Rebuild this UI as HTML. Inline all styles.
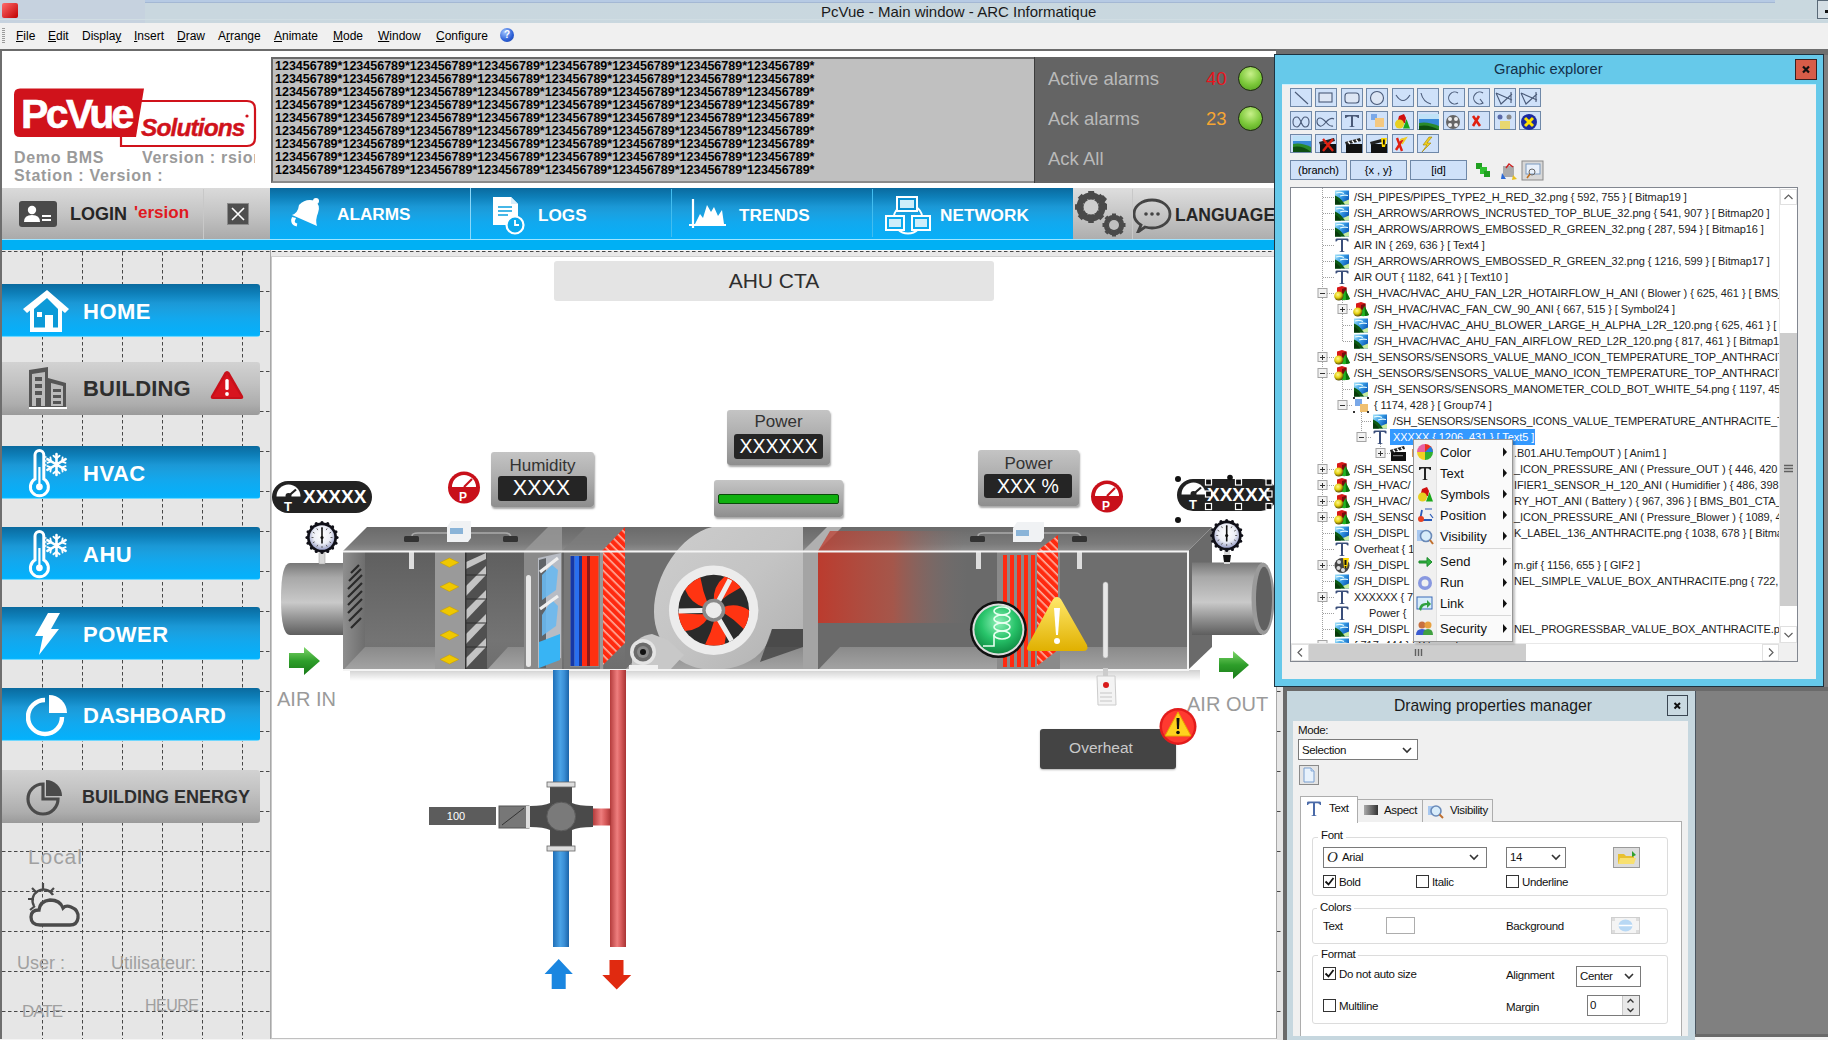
<!DOCTYPE html>
<html><head><meta charset="utf-8">
<style>
*{box-sizing:border-box;margin:0;padding:0}
html,body{width:1828px;height:1040px;overflow:hidden;background:#808080;font-family:"Liberation Sans",sans-serif}
.a{position:absolute}
.nw{white-space:nowrap}
#titlebar{left:0;top:0;width:1828px;height:23px;background:linear-gradient(90deg,#c6d2df 0,#c6d2df 145px,#c9d7df 145px,#c9d8df 100%)}
#menubar{left:0;top:23px;width:1828px;height:26px;background:#f0f0f0}
.menu{font-size:12px;color:#000;top:29px}
.menu u{text-decoration:underline}
#main{left:0;top:49px;width:1276px;height:991px;background:#fff;border-top:2px solid #6b6b6b}
</style></head><body>
<!-- title bar -->
<div id="titlebar" class="a">
  <div class="a" style="left:145px;top:0;width:1630px;height:3px;background:#b6cae4;border-bottom:1px solid #a4b8d4"></div><div class="a" style="left:0;top:19px;width:1828px;height:1px;background:#d0dde3"></div>
  <div class="a" style="left:2px;top:3px;width:16px;height:15px;border-radius:2px;background:linear-gradient(135deg,#ff6b6b,#c00000)"></div>
  <div class="a nw" style="left:821px;top:3px;font-size:15px;color:#1a1a1a">PcVue - Main window - ARC Informatique</div>
  <div class="a" style="left:1817px;top:0;width:11px;height:19px;border:1px solid #5a6a78;border-right:none;background:#d4dee4"></div><div class="a" style="left:1825px;top:10px;width:3px;height:3px;background:#111"></div>
</div>
<div id="menubar" class="a">
  <div class="a" style="left:2px;top:5px;width:3px;height:16px;background:repeating-linear-gradient(#9a9a9a 0 1px,transparent 1px 2px)"></div>
</div>
<div class="a menu nw" style="left:16px"><u>F</u>ile</div>
<div class="a menu nw" style="left:48px"><u>E</u>dit</div>
<div class="a menu nw" style="left:82px">Displa<u>y</u></div>
<div class="a menu nw" style="left:134px"><u>I</u>nsert</div>
<div class="a menu nw" style="left:177px"><u>D</u>raw</div>
<div class="a menu nw" style="left:218px">A<u>r</u>range</div>
<div class="a menu nw" style="left:274px"><u>A</u>nimate</div>
<div class="a menu nw" style="left:333px"><u>M</u>ode</div>
<div class="a menu nw" style="left:378px"><u>W</u>indow</div>
<div class="a menu nw" style="left:436px"><u>C</u>onfigure</div>
<div class="a" style="left:500px;top:28px;width:14px;height:14px;border-radius:50%;background:radial-gradient(circle at 35% 30%,#9fc3ff,#2c5fd6 60%,#1b3f9a);color:#fff;font-size:10px;font-weight:bold;text-align:center;line-height:14px">?</div>

<!-- main window -->
<div id="main" class="a"></div>

<!-- left border -->
<div class="a" style="left:0;top:51px;width:2px;height:989px;background:#6e6e6e"></div>
<!-- logo -->
<svg class="a" style="left:0;top:80px" width="270" height="110">
  <path d="M121,21 L247,21 Q255,21 255,29 L255,58 Q255,66 247,66 L121,66 Z" fill="#fff" stroke="#d0121b" stroke-width="2.2"/>
  <path d="M20,8.5 L144,8.5 L136,57 L20,57 Q14,57 14,51 L14,14.5 Q14,8.5 20,8.5 Z" fill="#d0121b"/>
  <path d="M136,57 L127,57 L122,65" fill="none" stroke="#fff" stroke-width="0"/>
  <text x="21" y="47.5" font-family="Liberation Sans" font-weight="bold" font-size="41" fill="#fff" letter-spacing="-2.6" stroke="#fff" stroke-width="0.6">PcVue</text>
  <text x="141" y="55.5" font-family="Liberation Sans" font-weight="bold" font-style="italic" font-size="24.5" fill="#d0121b" letter-spacing="-0.9" stroke="#d0121b" stroke-width="0.4">Solutions</text>
  <circle cx="247" cy="36" r="1.6" fill="#d0121b"/>
</svg>
<div class="a nw" style="left:14px;top:149px;font-size:16px;font-weight:bold;color:#9a9a9a;letter-spacing:0.7px">Demo BMS</div>
<div class="a nw" style="left:142px;top:149px;width:113px;overflow:hidden;font-size:16px;font-weight:bold;color:#9a9a9a;letter-spacing:0.7px">Version : rsion</div>
<div class="a nw" style="left:14px;top:167px;font-size:16px;font-weight:bold;color:#9a9a9a;letter-spacing:0.7px">Station : Version :</div>
<!-- text box -->
<div class="a" style="left:271px;top:57px;width:764px;height:126px;background:#c0c0c0;border:2px solid #6a6a6a;border-right:none;border-bottom-color:#8a8a8a;overflow:hidden">
 <div class="a" style="left:2px;top:1px;font-size:12.5px;font-weight:bold;line-height:13px;color:#000;white-space:pre">123456789*123456789*123456789*123456789*123456789*123456789*123456789*123456789*
123456789*123456789*123456789*123456789*123456789*123456789*123456789*123456789*
123456789*123456789*123456789*123456789*123456789*123456789*123456789*123456789*
123456789*123456789*123456789*123456789*123456789*123456789*123456789*123456789*
123456789*123456789*123456789*123456789*123456789*123456789*123456789*123456789*
123456789*123456789*123456789*123456789*123456789*123456789*123456789*123456789*
123456789*123456789*123456789*123456789*123456789*123456789*123456789*123456789*
123456789*123456789*123456789*123456789*123456789*123456789*123456789*123456789*
123456789*123456789*123456789*123456789*123456789*123456789*123456789*123456789*</div>
</div>

<!-- NAV BAR -->
<div class="a" style="left:2px;top:188px;width:268px;height:52px;background:linear-gradient(#dadada,#c4c4c4 50%,#a9a9a9)"></div>
<div class="a" style="left:203px;top:189px;width:1px;height:51px;background:#c8c8c8"></div>
<div class="a" style="left:19px;top:201px;width:38px;height:26px;border-radius:3px;background:#4a4a4a"></div>
<svg class="a" style="left:19px;top:201px" width="38" height="26"><circle cx="13" cy="9" r="4.2" fill="#fff"/><path d="M5,21 Q5,14 13,14 Q21,14 21,21 Z" fill="#fff"/><rect x="23" y="14" width="9" height="2" fill="#fff"/><rect x="23" y="18" width="9" height="2" fill="#fff"/></svg>
<div class="a nw" style="left:70px;top:205px;font-size:18px;line-height:18px;font-weight:bold;color:#262626">LOGIN</div>
<div class="a nw" style="left:134px;top:204px;font-size:17px;line-height:17px;font-weight:bold;color:#e01820">'ersion</div>
<div class="a" style="left:227px;top:203px;width:22px;height:22px;background:#4f4f4f;border:1px solid #8a8a8a"></div>
<svg class="a" style="left:227px;top:203px" width="22" height="22"><path d="M5,5 L17,17 M17,5 L5,17" stroke="#fff" stroke-width="1.6"/></svg>

<div class="a" style="left:270px;top:188px;width:803px;height:52px;background:linear-gradient(#0a6a9e 0,#0e80ba 18%,#1b98d6 36%,#1aa0e0 48%,#12a8ee 65%,#0aaef6 90%,#06b0fa 100%)"></div>
<div class="a" style="left:270px;top:188px;width:201px;height:52px;border:1px solid #8ad8fa;border-top:none;border-left:none"></div>
<div class="a" style="left:671px;top:189px;width:1px;height:48px;background:#42bdf0"></div>
<div class="a" style="left:872px;top:189px;width:1px;height:48px;background:#42bdf0"></div>
<!-- bell -->
<svg class="a" style="left:286px;top:196px" width="38" height="36"><path d="M13,9 Q20,2 29,5 Q35,9 32,17 Q29,24 31,30 L6,19 Q12,17 13,9 Z" fill="#fff"/><path d="M6,21 Q4,26 8,27 L10,22 Z" fill="#fff"/><circle cx="30" cy="5" r="3" fill="#fff"/><path d="M7,23 Q6,28 11,29" stroke="#fff" stroke-width="3" fill="none"/></svg>
<div class="a nw" style="left:337px;top:206px;font-size:17.2px;line-height:17px;font-weight:bold;color:#fff">ALARMS</div>
<!-- logs -->
<svg class="a" style="left:490px;top:195px" width="40" height="40"><path d="M3,2 L21,2 L28,9 L28,30 L3,30 Z" fill="#fff"/><path d="M21,2 L21,9 L28,9" fill="#d8eefa"/><path d="M8,12 L22,12 M8,16 L22,16 M8,20 L18,20" stroke="#0aa0e0" stroke-width="1.3"/><circle cx="25" cy="30" r="8.5" fill="#0aa8ec" stroke="#fff" stroke-width="2.2"/><path d="M25,25 L25,30 L29,30" stroke="#fff" stroke-width="1.8" fill="none"/></svg>
<div class="a nw" style="left:538px;top:207px;font-size:17.2px;line-height:17px;font-weight:bold;color:#fff">LOGS</div>
<!-- trends -->
<svg class="a" style="left:688px;top:196px" width="40" height="36"><path d="M5,3 L5,32 M1,29 L38,29" stroke="#fff" stroke-width="2.2"/><path d="M7,28 L12,18 L15,22 L19,9 L23,16 L26,11 L30,20 L34,14 L36,28 Z" fill="#fff"/></svg>
<div class="a nw" style="left:739px;top:207px;font-size:17.2px;line-height:17px;font-weight:bold;color:#fff">TRENDS</div>
<!-- network -->
<svg class="a" style="left:884px;top:195px" width="48" height="42"><circle cx="24" cy="24" r="14.5" fill="none" stroke="#fff" stroke-width="1.8"/><rect x="13" y="2" width="20" height="14" fill="#0b8fd0" stroke="#fff" stroke-width="2"/><rect x="16" y="5" width="14" height="8" fill="#cfeefa"/><rect x="2" y="21" width="18" height="14" fill="#0aa8ec" stroke="#fff" stroke-width="2"/><rect x="28" y="21" width="18" height="14" fill="#0aa8ec" stroke="#fff" stroke-width="2"/><rect x="5" y="24" width="12" height="8" fill="#cfeefa"/><rect x="31" y="24" width="12" height="8" fill="#cfeefa"/></svg>
<div class="a nw" style="left:940px;top:207px;font-size:17.2px;line-height:17px;font-weight:bold;color:#fff">NETWORK</div>

<div class="a" style="left:1073px;top:188px;width:202px;height:52px;background:linear-gradient(#dedede,#c6c6c6 50%,#adadad)"></div>
<div class="a" style="left:1132px;top:189px;width:1px;height:51px;background:#c8c8c8"></div>
<svg class="a" style="left:1074px;top:190px" width="58" height="48">
 <g fill="#4a4a4a" transform="translate(17,17)">
  <path d="M-3,-16 L3,-16 L4,-11 L8,-9 L12,-12 L16,-8 L13,-4 L15,0 L16,3 L16,-3 Z"/>
 </g>
 <g transform="translate(17,17)"><circle r="11.5" fill="none" stroke="#4a4a4a" stroke-width="6"/>
  <g stroke="#4a4a4a" stroke-width="5.5"><path d="M0,-16 V16 M-16,0 H16 M-11.3,-11.3 L11.3,11.3 M11.3,-11.3 L-11.3,11.3"/></g>
  <circle r="7.5" fill="#cdcdcd"/></g>
 <g transform="translate(40,35)"><circle r="8" fill="none" stroke="#4a4a4a" stroke-width="4.5"/>
  <g stroke="#4a4a4a" stroke-width="4"><path d="M0,-11.5 V11.5 M-11.5,0 H11.5 M-8.1,-8.1 L8.1,8.1 M8.1,-8.1 L-8.1,8.1"/></g>
  <circle r="5" fill="#c0c0c0"/></g>
</svg>
<svg class="a" style="left:1133px;top:197px" width="42" height="36"><path d="M19,3 C29,3 37,9 37,17 C37,25 29,31 19,31 C16,31 14,30.5 12,30 L5,35 L8,28 C3,25 1,21 1,17 C1,9 9,3 19,3 Z" fill="none" stroke="#444" stroke-width="2.8"/><circle cx="13" cy="17" r="1.8" fill="#444"/><circle cx="19" cy="17" r="1.8" fill="#444"/><circle cx="25" cy="17" r="1.8" fill="#444"/></svg>
<div class="a" style="left:1175px;top:189px;width:100px;height:51px;overflow:hidden"><div class="a nw" style="left:0;top:18px;font-size:17.5px;line-height:17px;font-weight:bold;color:#262626">LANGUAGE</div></div>

<div class="a" style="left:2px;top:239px;width:1273px;height:11px;background:#00b0f4;border-top:1px solid #a0e4ff"></div><div class="a" style="left:271px;top:250px;width:1005px;height:6px;background:#e8e8e8;border-top:1px solid #f8f8f8"></div>

<!-- SIDEBAR -->
<div class="a" style="left:2px;top:250px;width:269px;height:789px;background:#e6e6e6;border-right:1px solid #a8a8a8"></div>
<svg class="a" style="left:0;top:250px" width="1276" height="790">
 <defs>
  <pattern id="gx" x="0" y="1" width="40" height="40" patternUnits="userSpaceOnUse"><path d="M0,0.5 H40" stroke="#3c3c3c" stroke-width="1" stroke-dasharray="3.5 2.5"/></pattern>
 </defs>
 <g stroke="#474747" stroke-width="1" stroke-dasharray="3.5 2.5">
  <path d="M2,1.5 H1276 M2,41.5 H270 M2,81.5 H270 M2,121.5 H270 M2,161.5 H270 M2,201.5 H270 M2,241.5 H270 M2,281.5 H270 M2,321.5 H270 M2,361.5 H270 M2,401.5 H270 M2,441.5 H270 M2,481.5 H270 M2,521.5 H270 M2,561.5 H270 M2,601.5 H270 M2,641.5 H270 M2,681.5 H270 M2,721.5 H270 M2,761.5 H270"/>
  <path d="M42.5,2 V789 M82.5,2 V789 M122.5,2 V789 M162.5,2 V789 M202.5,2 V789 M242.5,2 V789"/>
 </g>
</svg>

<!-- SIDEBAR BUTTONS -->
<style>
.bb{position:absolute;left:2px;width:258px;height:53px;border-radius:0 3px 3px 0;background:linear-gradient(#0a6a9e 0,#0e80ba 18%,#1b98d6 36%,#1aa0e0 48%,#12a8ee 65%,#06b0fa 92%,#03b2fc 97%,#a0e8ff 100%)}
.gb{position:absolute;left:2px;width:258px;height:53px;border-radius:0 3px 3px 0;background:linear-gradient(#d2d2d2 0,#c2c2c2 40%,#adadad 80%,#9a9a9a 100%)}
.bt{position:absolute;left:83px;font-size:22px;line-height:22px;font-weight:bold;white-space:nowrap;letter-spacing:0.5px}
</style>
<div class="bb" style="top:284px"></div>
<svg class="a" style="left:22px;top:287px" width="50" height="48"><path d="M25,3 L47,22 L43,26 L40,23.5 L40,45 L8,45 L8,23.5 L5,26 L1,22 Z" fill="#fff"/><path d="M12,22 L25,11 L36,22 L36,40.5 L12,40.5 Z" fill="#0c9ad8"/><rect x="15" y="25" width="5" height="5" fill="#fff"/><rect x="23" y="28" width="8" height="13" fill="#fff"/></svg>
<div class="bt" style="top:300.6px;color:#fff">HOME</div>

<div class="gb" style="top:362px"></div>
<svg class="a" style="left:26px;top:366px" width="42" height="44"><path d="M3,4 L22,1 L22,42 L3,42 Z" fill="#555"/><path d="M6,8 L19,6 L19,40 L6,40 Z" fill="#bbb"/><path d="M22,12 L40,17 L40,42 L22,42 Z" fill="#555"/><path d="M25,17 L37,20 L37,40 L25,40 Z" fill="#bbb"/><g fill="#555"><rect x="9" y="11" width="7" height="4"/><rect x="9" y="18" width="7" height="4"/><rect x="9" y="25" width="7" height="4"/><rect x="10" y="32" width="5" height="8"/><rect x="27" y="23" width="8" height="3"/><rect x="27" y="29" width="8" height="3"/><rect x="27" y="35" width="8" height="3"/></g><rect x="3" y="41" width="38" height="2" fill="#fff"/></svg>
<div class="bt" style="top:378.2px;color:#2e2e2e;letter-spacing:0.2px">BUILDING</div>
<svg class="a" style="left:209px;top:369px" width="36" height="32"><path d="M18,2 Q19.5,2 20.5,3.5 L34,27 Q35,30 32,30 L4,30 Q1,30 2,27 L15.5,3.5 Q16.5,2 18,2 Z" fill="#c8101a"/><path d="M18,5 L32,28 L4,28 Z" fill="#d8141e"/><rect x="16.3" y="10" width="3.4" height="11" rx="1.5" fill="#fff"/><circle cx="18" cy="25" r="1.9" fill="#fff"/></svg>

<div class="bb" style="top:446px"></div>
<svg class="a" style="left:26px;top:448px" width="46" height="52"><path d="M9,31 L9,7 A4.4,4.4 0 0 1 17.8,7 L17.8,31 A9,9 0 1 1 9,31 Z" fill="none" stroke="#fff" stroke-width="3"/><circle cx="13.4" cy="38.85" r="3.4" fill="#fff"/><rect x="12.3" y="19" width="2.2" height="19" fill="#fff"/><path d="M17.8,9 H20.5 M17.8,13 H20.5 M17.8,17 H20.5" stroke="#fff" stroke-width="1.3"/><g stroke="#fff" stroke-width="2.6" stroke-linecap="round" fill="none"><path d="M30.5,16.5 L30.5,6.0 M30.5,16.5 L21.4,11.2 M30.5,16.5 L21.4,21.8 M30.5,16.5 L30.5,27.0 M30.5,16.5 L39.6,21.8 M30.5,16.5 L39.6,11.2"/></g><g stroke="#fff" stroke-width="1.8" stroke-linecap="round" fill="none"><path d="M30.5,10.3 L33.6,7.7 M30.5,10.3 L27.4,7.7 M25.1,13.4 L24.4,9.5 M25.1,13.4 L21.4,14.8 M25.1,19.6 L21.4,18.2 M25.1,19.6 L24.4,23.5 M30.5,22.7 L27.4,25.3 M30.5,22.7 L33.6,25.3 M35.9,19.6 L36.6,23.5 M35.9,19.6 L39.6,18.2 M35.9,13.4 L39.6,14.8 M35.9,13.4 L36.6,9.5"/></g></svg>
<div class="bt" style="top:462.6px;color:#fff">HVAC</div>

<div class="bb" style="top:527px"></div>
<svg class="a" style="left:26px;top:529px" width="46" height="52"><path d="M9,31 L9,7 A4.4,4.4 0 0 1 17.8,7 L17.8,31 A9,9 0 1 1 9,31 Z" fill="none" stroke="#fff" stroke-width="3"/><circle cx="13.4" cy="38.85" r="3.4" fill="#fff"/><rect x="12.3" y="19" width="2.2" height="19" fill="#fff"/><path d="M17.8,9 H20.5 M17.8,13 H20.5 M17.8,17 H20.5" stroke="#fff" stroke-width="1.3"/><g stroke="#fff" stroke-width="2.6" stroke-linecap="round" fill="none"><path d="M30.5,16.5 L30.5,6.0 M30.5,16.5 L21.4,11.2 M30.5,16.5 L21.4,21.8 M30.5,16.5 L30.5,27.0 M30.5,16.5 L39.6,21.8 M30.5,16.5 L39.6,11.2"/></g><g stroke="#fff" stroke-width="1.8" stroke-linecap="round" fill="none"><path d="M30.5,10.3 L33.6,7.7 M30.5,10.3 L27.4,7.7 M25.1,13.4 L24.4,9.5 M25.1,13.4 L21.4,14.8 M25.1,19.6 L21.4,18.2 M25.1,19.6 L24.4,23.5 M30.5,22.7 L27.4,25.3 M30.5,22.7 L33.6,25.3 M35.9,19.6 L36.6,23.5 M35.9,19.6 L39.6,18.2 M35.9,13.4 L39.6,14.8 M35.9,13.4 L36.6,9.5"/></g></svg>
<div class="bt" style="top:543.5px;color:#fff">AHU</div>

<div class="bb" style="top:607px"></div>
<svg class="a" style="left:30px;top:612px" width="34" height="44"><path d="M18,1 L30,1 L21,17 L29,17 L9,43 L13,24 L5,24 Z" fill="#fff"/></svg>
<div class="bt" style="top:623.8px;color:#fff">POWER</div>

<div class="bb" style="top:688px"></div>
<svg class="a" style="left:26px;top:692px" width="44" height="46"><path d="M19,8 A17,17 0 1 0 36,25" fill="none" stroke="#fff" stroke-width="4.5"/><path d="M19,20 L19,8 A17,17 0 0 1 36,25 L24,25 Z" fill="none" stroke="#fff" stroke-width="0"/><path d="M23,3 A18,18 0 0 1 41,21 L23,21 Z" fill="#fff"/></svg>
<div class="bt" style="top:704.8px;color:#fff;letter-spacing:0px">DASHBOARD</div>

<div class="gb" style="top:770px"></div>
<svg class="a" style="left:24px;top:775px" width="44" height="44"><path d="M19,9 A15,15 0 1 0 34,24 L19,24 Z" fill="none" stroke="#4a4a4a" stroke-width="3.2"/><path d="M22,5 A16,16 0 0 1 38,21 L22,21 Z" fill="#4a4a4a"/></svg>
<div class="bt" style="top:788px;left:82px;font-size:18px;line-height:18px;color:#2e2e2e;letter-spacing:0">BUILDING ENERGY</div>

<div class="a nw" style="left:28px;top:845.5px;font-size:21px;line-height:21px;color:#a0a0a0;letter-spacing:0.9px">Local</div>
<svg class="a" style="left:26px;top:880px" width="60" height="50"><g stroke="#4a4a4a" stroke-width="2.2"><path d="M17,3 V9 M6,8 L10,12 M2,19 H8 M4,30 L9,26 M28,8 L24,12"/></g><path d="M8,26 A10,10 0 0 1 27,15" fill="none" stroke="#4a4a4a" stroke-width="2.4"/><path d="M14,45 Q5,45 5,37 Q5,30 13,30 Q14,21 24,20 Q34,20 37,28 Q40,25 45,27 Q53,30 52,38 Q51,45 44,45 Z" fill="#e6e6e6" stroke="#4a4a4a" stroke-width="3.3"/></svg>
<div class="a nw" style="left:17px;top:954px;font-size:18px;line-height:18px;color:#a0a0a0">User :</div>
<div class="a nw" style="left:111px;top:954px;font-size:18px;line-height:18px;color:#a0a0a0">Utilisateur:</div>
<div class="a nw" style="left:22px;top:1002.5px;font-size:17px;line-height:17px;color:#a0a0a0;letter-spacing:-1px">DATE</div>
<div class="a nw" style="left:145px;top:998px;font-size:16px;line-height:16px;color:#a0a0a0;letter-spacing:-0.5px">HEURE</div>

<!-- CANVAS -->
<div class="a" style="left:271px;top:256px;width:1006px;height:783px;background:#fff;border-left:1px solid #c8c8c8;border-top:1px solid #d0d0d0;border-bottom:1px solid #c0c0c0;border-right:1px solid #a8a8a8"></div><div class="a" style="left:0;top:1039px;width:1283px;height:1px;background:#f4f4f4"></div>

<!-- CANVAS CONTENT -->
<svg class="a" style="left:0;top:0" width="1276" height="1040" viewBox="0 0 1276 1040">
<defs>
 <linearGradient id="pipeV" x1="0" y1="0" x2="0" y2="1"><stop offset="0" stop-color="#777"/><stop offset="0.2" stop-color="#a8a8a8"/><stop offset="0.55" stop-color="#c9c9c9"/><stop offset="0.8" stop-color="#8c8c8c"/><stop offset="1" stop-color="#5e5e5e"/></linearGradient>
 <linearGradient id="topFace" x1="0" y1="0" x2="0" y2="1"><stop offset="0" stop-color="#6a6a6a"/><stop offset="0.7" stop-color="#7a7a7a"/><stop offset="1" stop-color="#8e8e8e"/></linearGradient>
 <linearGradient id="backWall" x1="0" y1="0" x2="0" y2="1"><stop offset="0" stop-color="#5f5f5f"/><stop offset="0.75" stop-color="#747474"/><stop offset="1" stop-color="#6e6e6e"/></linearGradient>
 <linearGradient id="floor" x1="0" y1="0" x2="0" y2="1"><stop offset="0" stop-color="#8a8a8a"/><stop offset="1" stop-color="#a4a4a4"/></linearGradient>
 <linearGradient id="sideWall" x1="0" y1="0" x2="1" y2="0"><stop offset="0" stop-color="#8e8e8e"/><stop offset="1" stop-color="#6e6e6e"/></linearGradient>
 <linearGradient id="boxG" x1="0" y1="0" x2="0" y2="1"><stop offset="0" stop-color="#c6c6c6"/><stop offset="0.6" stop-color="#a8a8a8"/><stop offset="1" stop-color="#8a8a8a"/></linearGradient>
 <linearGradient id="bluePipe" x1="0" y1="0" x2="1" y2="0"><stop offset="0" stop-color="#1f6fb8"/><stop offset="0.45" stop-color="#4ba3e6"/><stop offset="0.7" stop-color="#3a8fd6"/><stop offset="1" stop-color="#1c64a8"/></linearGradient>
 <linearGradient id="redPipe" x1="0" y1="0" x2="1" y2="0"><stop offset="0" stop-color="#b43c3c"/><stop offset="0.45" stop-color="#ee7e7e"/><stop offset="0.7" stop-color="#d65a5a"/><stop offset="1" stop-color="#a83434"/></linearGradient>
 <radialGradient id="gaugeFace" cx="0.5" cy="0.4" r="0.6"><stop offset="0" stop-color="#ffffff"/><stop offset="0.6" stop-color="#eceef6"/><stop offset="1" stop-color="#9aa0c8"/></radialGradient>
 <linearGradient id="redFlow" x1="0" y1="0" x2="1" y2="0"><stop offset="0" stop-color="#c0392b" stop-opacity="0.95"/><stop offset="0.5" stop-color="#b85040" stop-opacity="0.75"/><stop offset="1" stop-color="#777" stop-opacity="0"/></linearGradient>
 <radialGradient id="greenBtn" cx="0.5" cy="0.35" r="0.65"><stop offset="0" stop-color="#8ff0b8"/><stop offset="0.55" stop-color="#28c46a"/><stop offset="1" stop-color="#0e8a42"/></radialGradient>
 <linearGradient id="warnY" x1="0" y1="0" x2="0" y2="1"><stop offset="0" stop-color="#ffe86a"/><stop offset="1" stop-color="#e0b000"/></linearGradient>
 <linearGradient id="fanHousing" x1="0" y1="0" x2="1" y2="1"><stop offset="0" stop-color="#cdcdcd"/><stop offset="0.5" stop-color="#c4c4c4"/><stop offset="1" stop-color="#b0b0b0"/></linearGradient>
 <linearGradient id="arrowG" x1="0" y1="0" x2="0" y2="1"><stop offset="0" stop-color="#7ed66a"/><stop offset="0.5" stop-color="#2e9e2a"/><stop offset="1" stop-color="#187a18"/></linearGradient>
 <pattern id="hatch" width="6" height="6" patternUnits="userSpaceOnUse" patternTransform="rotate(45)"><rect width="6" height="6" fill="#ff2a10"/><rect width="6" height="1.6" fill="#ffb0a0"/></pattern>
</defs>

<!-- shadow under AHU -->
<linearGradient id="shadowG" x1="0" y1="0" x2="0" y2="1"><stop offset="0" stop-color="#000" stop-opacity="0.18"/><stop offset="1" stop-color="#000" stop-opacity="0"/></linearGradient><rect x="350" y="670" width="850" height="11" fill="url(#shadowG)"/>
<!-- inlet pipe -->
<path d="M290,563 L344,563 L344,635 L290,635 Q281,635 281,599 Q281,563 290,563 Z" fill="url(#pipeV)"/>
<!-- gauge left stem -->
<rect x="319" y="548" width="6" height="16" fill="#d8d8d8" stroke="#999" stroke-width="0.5"/>
<g><circle cx="322" cy="537.5" r="15" fill="#101018"/><g fill="#101018"><circle cx="337.0" cy="537.5" r="1.6"/><circle cx="335.9" cy="543.2" r="1.6"/><circle cx="332.6" cy="548.1" r="1.6"/><circle cx="327.7" cy="551.4" r="1.6"/><circle cx="322.0" cy="552.5" r="1.6"/><circle cx="316.3" cy="551.4" r="1.6"/><circle cx="311.4" cy="548.1" r="1.6"/><circle cx="308.1" cy="543.2" r="1.6"/><circle cx="307.0" cy="537.5" r="1.6"/><circle cx="308.1" cy="531.8" r="1.6"/><circle cx="311.4" cy="526.9" r="1.6"/><circle cx="316.3" cy="523.6" r="1.6"/><circle cx="322.0" cy="522.5" r="1.6"/><circle cx="327.7" cy="523.6" r="1.6"/><circle cx="332.6" cy="526.9" r="1.6"/><circle cx="335.9" cy="531.8" r="1.6"/></g><circle cx="322" cy="537.5" r="12.3" fill="url(#gaugeFace)"/><path d="M330.5,537.5 L332.5,537.5 M329.4,541.8 L331.1,542.8 M326.2,544.9 L327.2,546.6 M322.0,546.0 L322.0,548.0 M317.8,544.9 L316.8,546.6 M314.6,541.8 L312.9,542.8 M313.5,537.5 L311.5,537.5 M314.6,533.2 L312.9,532.2 M317.8,530.1 L316.8,528.4 M322.0,529.0 L322.0,527.0 M326.2,530.1 L327.2,528.4 M329.4,533.2 L331.1,532.2" stroke="#555" stroke-width="0.9"/><path d="M322,543.5 L322,527.5" stroke="#111" stroke-width="1.6"/><circle cx="322" cy="537.5" r="1.6" fill="#111"/></g>

<!-- top face -->
<path d="M367,527 L1212,527 L1188,551 L343,551 Z" fill="url(#topFace)"/>
<!-- right side face -->
<path d="M1188,551 L1212,527 L1212,647 L1188,670 Z" fill="#6a6a6a"/>
<!-- front interior base -->
<rect x="343" y="551" width="845" height="119" fill="url(#backWall)"/>
<!-- left section -->
<path d="M343,551 L365,551 L365,647 L343,670 Z" fill="url(#sideWall)"/>
<path d="M343,670 L365,647 L435,647 L435,670 Z" fill="url(#floor)"/>
<g stroke="#2a2a2a" stroke-width="2.2">
 <path d="M351,573 L359,565 M349,581 L361,569 M348,589 L362,575 M348,597 L362,583 M348,605 L362,591 M348,613 L362,599 M349,621 L362,608 M351,628 L361,618"/>
</g>
<!-- probe left -->
<rect x="409" y="552" width="5" height="17" fill="#ddd"/>
<!-- filter column -->
<rect x="435" y="551" width="30" height="119" fill="#9a9a9a"/>
<g fill="#f0c800" stroke="#c8a000" stroke-width="0.6">
 <path d="M440,562.6 L449.4,558 L458.8,562.6 L449.4,567.3 Z"/>
 <path d="M440,586.8 L449.4,582.2 L458.8,586.8 L449.4,591.5 Z"/>
 <path d="M440,611 L449.4,606.4 L458.8,611 L449.4,615.7 Z"/>
 <path d="M440,635.2 L449.4,630.6 L458.8,635.2 L449.4,639.9 Z"/>
 <path d="M440,659.4 L449.4,654.8 L458.8,659.4 L449.4,664 Z"/>
</g>
<!-- dampers -->
<rect x="465" y="551" width="22" height="119" fill="#505050"/>
<g fill="#c4c4c4">
 <path d="M466,562 L486,553 L486,559 L466,569 Z"/>
 <path d="M466,586 L486,566 L486,575 L466,596 Z"/>
 <path d="M466,610 L486,590 L486,599 L466,620 Z"/>
 <path d="M466,634 L486,614 L486,623 L466,644 Z"/>
 <path d="M466,658 L486,638 L486,647 L466,668 Z"/>
</g>
<g stroke="#2e2e2e" stroke-width="1.2"><path d="M465,575 H487 M465,599 H487 M465,623 H487 M465,647 H487"/></g>
<rect x="465" y="551" width="1.5" height="119" fill="#333"/>
<path d="M487,670 L508,647 L524,647 L524,670 Z" fill="url(#floor)"/>
<!-- humidifier section -->
<path d="M524,551 L548,527 L562,527 L562,551 Z" fill="#9a9a9a" opacity="0.8"/><path d="M562,551 L586,527 L625,527 L602,551 Z" fill="#7e7e7e" opacity="0.7"/>
<rect x="524" y="551" width="38" height="119" fill="#8a8a8a"/>
<rect x="526" y="575" width="5" height="92" rx="2.5" fill="#e8e8e8"/>
<path d="M538,558 L561,553 L561,658 L538,668 Z" fill="#b8bcc4"/>
<path d="M539,560 L546,558 L546,668 L539,668 Z" fill="#606468"/>
<path d="M542,575 L552,565 L558,570 L556,590 L542,600 Z" fill="#6ab8f0" opacity="0.9"/>
<path d="M542,615 L552,600 L558,606 L556,626 L542,636 Z" fill="#6ab8f0" opacity="0.9"/>
<path d="M539,642 L560,634 L560,660 L539,668 Z" fill="#38b4f4"/>
<path d="M540,572 L558,558 M540,609 L558,596" stroke="#f0f0f0" stroke-width="3.2"/>
<!-- coil -->
<rect x="564" y="551" width="40" height="119" fill="#787878"/>
<rect x="570" y="555" width="29" height="112" fill="#8a8a8a"/>
<rect x="570.5" y="556" width="4" height="110" fill="#1638a8"/>
<rect x="574.5" y="556" width="4.5" height="110" fill="#2a70f0"/>
<rect x="579" y="556" width="3" height="110" fill="#1a3490"/>
<rect x="582" y="556" width="5" height="110" fill="#ff2a10"/>
<rect x="587" y="556" width="3" height="110" fill="#8a1818"/>
<rect x="590" y="556" width="8.5" height="110" fill="#ff3010"/>
<!-- red heater grille skew -->
<path d="M602,551 L625,527 L625,643 L602,666 Z" fill="url(#hatch)"/>
<rect x="600" y="551" width="3" height="119" fill="#999"/>
<!-- fan section -->
<rect x="625" y="551" width="178" height="119" fill="#6f6f6f"/>
<path d="M625,670 L647,647 L803,647 L803,670 Z" fill="url(#floor)"/>
<path d="M654,612 C654,575 680,535 712,527 L803,527 L803,629 L772,629 C768,655 745,669 714,670 C680,670 654,645 654,612 Z" fill="url(#fanHousing)"/>
<path d="M772,629 L803,629 L803,647 L760,662 Z" fill="#3e3e3e" opacity="0.75"/>
<circle cx="713.7" cy="610.2" r="44.7" fill="#ececec"/>
<circle cx="713.7" cy="610.2" r="35.4" fill="#2a2a2a"/>
<g fill="#ff3412"><path d="M713.7,601.2 Q712.9,586.2 724.6,576.5 A35.4,35.4 0 0 1 740.8,587.4 Q728.4,593.9 718.2,602.4 Z"/><path d="M722.3,607.4 Q736.3,602.0 749.1,610.2 A35.4,35.4 0 0 1 743.7,629.0 Q733.8,619.1 722.5,612.1 Z"/><path d="M719.0,617.5 Q728.5,629.1 724.6,643.9 A35.4,35.4 0 0 1 705.1,644.5 Q711.4,632.1 714.6,619.2 Z"/><path d="M708.4,617.5 Q700.3,630.1 685.1,631.0 A35.4,35.4 0 0 1 678.4,612.7 Q692.2,614.8 705.5,613.9 Z"/><path d="M705.1,607.4 Q690.6,603.6 685.1,589.4 A35.4,35.4 0 0 1 700.4,577.4 Q702.7,591.1 707.7,603.5 Z"/></g>
<g stroke="#ececec" stroke-width="5"><path d="M713.7,610.2 L730,579.6 M713.7,610.2 L678.7,611 M713.7,610.2 L731.6,640.7"/></g>
<circle cx="713.7" cy="610.2" r="11.5" fill="#8a8a8a"/>
<circle cx="713.7" cy="610.2" r="8" fill="#ececec"/>
<!-- motor -->
<path d="M632,668 L632,650 Q636,636 652,634 L668,640 L684,655 L670,670 Z" fill="#c8c8c8"/>
<circle cx="643" cy="652" r="13" fill="#e4e4e4"/>
<circle cx="643" cy="652" r="9.5" fill="#6a6a6a"/>
<circle cx="643" cy="652" r="6" fill="#8a8a8a"/>
<circle cx="643" cy="652" r="3" fill="#111"/>
<rect x="629" y="665" width="29" height="5" fill="#f0f0f0"/>
<!-- divider -->
<rect x="803" y="551" width="15" height="119" fill="#a4a4a4"/>
<path d="M803,551 L827,527 L842,527 L818,551 Z" fill="#b0b0b0"/>
<!-- red flow -->
<rect x="818" y="551" width="180" height="119" fill="#6a6a6a"/>
<path d="M818,670 L840,647 L999,647 L999,670 Z" fill="url(#floor)"/>
<path d="M830,531 L970,531 L960,551 L818,551 Z" fill="url(#redFlow)" opacity="0.8"/>
<rect x="818" y="551" width="150" height="72" fill="url(#redFlow)"/>
<!-- right section -->
<rect x="999" y="551" width="189" height="119" fill="#6e6e6e"/>
<path d="M999,670 L1020,647 L1188,647 L1188,670 Z" fill="url(#floor)"/>
<!-- electric heater -->
<rect x="997" y="551" width="63" height="119" fill="#8a8a8a"/>
<g fill="#ff2a10">
 <rect x="1003" y="555" width="4" height="112"/><rect x="1010" y="555" width="4" height="112"/><rect x="1017" y="555" width="4" height="112"/><rect x="1024" y="555" width="4" height="112"/><rect x="1031" y="555" width="4" height="112"/>
</g>
<path d="M1037,551 L1058,535 L1058,650 L1037,666 Z" fill="url(#hatch)"/>
<!-- probes right -->
<rect x="976" y="552" width="5" height="17" fill="#ddd"/>
<rect x="1077" y="552" width="5" height="17" fill="#ddd"/>
<rect x="1103" y="582" width="5" height="76" rx="2.5" fill="#e8e8e8" stroke="#aaa" stroke-width="0.5"/>
<!-- green button -->
<circle cx="998.4" cy="629.6" r="28.5" fill="#111"/>
<circle cx="998.4" cy="629.6" r="26" fill="#ddd"/>
<circle cx="998.4" cy="629.6" r="24" fill="url(#greenBtn)"/>
<g fill="none" stroke="#e8fff0" stroke-width="1.6"><ellipse cx="1002" cy="611" rx="8" ry="4"/><ellipse cx="1002" cy="619" rx="8" ry="4"/><ellipse cx="1002" cy="627" rx="8" ry="4"/><ellipse cx="1002" cy="635" rx="8" ry="4"/><path d="M994,635 L994,646 L983,646"/></g>
<!-- warning triangle -->
<path d="M1057,597 Q1060,597 1062,601 L1087,645 Q1089,651 1083,651 L1031,651 Q1025,651 1028,645 L1052,601 Q1054,597 1057,597 Z" fill="url(#warnY)"/>
<path d="M1054,608 L1060,608 L1058,635 L1056,635 Z" fill="#fff"/><circle cx="1057" cy="641" r="3" fill="#fff"/>
<!-- front face white edges -->
<path d="M343,551.5 H1188 V670 H343" fill="none" stroke="#f4f4f4" stroke-width="2"/>
<!-- outlet pipe -->
<path d="M1192,562.5 L1262,562.5 L1262,635 L1192,635 Z" fill="url(#pipeV)"/>
<ellipse cx="1263" cy="598.8" rx="11.5" ry="36.3" fill="#9a9a9a"/>
<ellipse cx="1264" cy="598.8" rx="8" ry="32" fill="#606060"/>
<!-- gauge right -->
<rect x="1224" y="546" width="6" height="18" fill="#d8d8d8"/>
<path d="M1223,555 L1231,555 L1230,562 L1224,562 Z" fill="#111"/>
<g><circle cx="1226.7" cy="535.5" r="15" fill="#101018"/><g fill="#101018"><circle cx="1241.7" cy="535.5" r="1.6"/><circle cx="1240.6" cy="541.2" r="1.6"/><circle cx="1237.3" cy="546.1" r="1.6"/><circle cx="1232.4" cy="549.4" r="1.6"/><circle cx="1226.7" cy="550.5" r="1.6"/><circle cx="1221.0" cy="549.4" r="1.6"/><circle cx="1216.1" cy="546.1" r="1.6"/><circle cx="1212.8" cy="541.2" r="1.6"/><circle cx="1211.7" cy="535.5" r="1.6"/><circle cx="1212.8" cy="529.8" r="1.6"/><circle cx="1216.1" cy="524.9" r="1.6"/><circle cx="1221.0" cy="521.6" r="1.6"/><circle cx="1226.7" cy="520.5" r="1.6"/><circle cx="1232.4" cy="521.6" r="1.6"/><circle cx="1237.3" cy="524.9" r="1.6"/><circle cx="1240.6" cy="529.8" r="1.6"/></g><circle cx="1226.7" cy="535.5" r="12.3" fill="url(#gaugeFace)"/><path d="M1235.2,535.5 L1237.2,535.5 M1234.1,539.8 L1235.8,540.8 M1231.0,542.9 L1232.0,544.6 M1226.7,544.0 L1226.7,546.0 M1222.5,542.9 L1221.5,544.6 M1219.3,539.8 L1217.6,540.8 M1218.2,535.5 L1216.2,535.5 M1219.3,531.2 L1217.6,530.2 M1222.5,528.1 L1221.5,526.4 M1226.7,527.0 L1226.7,525.0 M1231.0,528.1 L1232.0,526.4 M1234.1,531.2 L1235.8,530.2" stroke="#555" stroke-width="0.9"/><path d="M1226.7,541.5 L1226.7,525.5" stroke="#111" stroke-width="1.6"/><circle cx="1226.7" cy="535.5" r="1.6" fill="#111"/></g>

<!-- humidity controllers on top -->
<g>
 <path d="M412,541 L412,536 Q412,533 418,533 L447,533 M470,533 L505,533 Q511,533 511,538 L511,541" fill="none" stroke="#aaa" stroke-width="1.5"/>
 <rect x="404" y="536" width="15" height="6" rx="1.5" fill="#333"/>
 <rect x="503" y="536" width="15" height="6" rx="1.5" fill="#333"/>
 <path d="M447,527 L451,521 L471,521 L471,538 L468,542 L447,542 Z" fill="#f0f2f4"/>
 <rect x="450" y="528" width="13" height="6" fill="#8ab4d8"/>
</g>
<g>
 <path d="M978,541 L978,536 Q978,533 984,533 L1013,533 M1040,533 L1075,533 Q1081,533 1081,538 L1081,541" fill="none" stroke="#aaa" stroke-width="1.5"/>
 <rect x="970" y="536" width="15" height="6" rx="1.5" fill="#333"/>
 <rect x="1072" y="536" width="15" height="6" rx="1.5" fill="#333"/>
 <path d="M1013,528 L1017,522 L1044,522 L1044,538 L1041,542 L1013,542 Z" fill="#f0f2f4"/>
 <rect x="1016" y="530" width="13" height="6" fill="#8ab4d8"/>
</g>

<!-- green arrows -->
<path d="M289,653 L304,653 L304,647 L320,661 L304,675 L304,668 L289,668 Z" fill="url(#arrowG)"/>
<path d="M1219,658 L1233,658 L1233,651 L1249,665 L1233,679 L1233,672 L1219,672 Z" fill="url(#arrowG)"/>

<!-- sensor tag -->
<rect x="1103" y="668" width="5" height="8" fill="#ccc"/>
<path d="M1097,676 L1115,676 L1116,705 L1098,705 Z" fill="#f4f4f4" stroke="#ccc" stroke-width="1"/>
<circle cx="1106" cy="685" r="3" fill="#d81b1b"/>
<path d="M1100,693 H1112 M1100,697 H1112 M1100,701 H1112" stroke="#bbb" stroke-width="0.8"/>

<!-- pipes -->
<rect x="553" y="670" width="16" height="277" fill="url(#bluePipe)"/>
<rect x="610" y="670" width="16" height="277" fill="url(#redPipe)"/>
<!-- valve -->
<rect x="429" y="807" width="67" height="18" fill="#5c5c5c"/>
<text x="456" y="820" font-family="Liberation Sans" font-size="11" fill="#fff" text-anchor="middle">100</text>
<rect x="499" y="806" width="30" height="22" fill="#777" stroke="#555" stroke-width="1"/>
<path d="M502,825 L524,808" stroke="#333" stroke-width="1"/>
<rect x="526" y="806" width="4" height="22" fill="#ddd"/>
<rect x="593" y="808.5" width="18" height="17" fill="url(#redPipe)"/>
<path d="M550,784 L572,784 L572,803 Q578,806 593,806 L593,827 Q578,827 572,830 L572,849 L550,849 L550,830 Q544,827 530,827 L530,806 Q544,806 550,803 Z" fill="#4a4a4a"/>
<rect x="547" y="782" width="28" height="5" fill="#ddd" stroke="#666" stroke-width="0.8"/>
<rect x="547" y="846" width="28" height="5" fill="#ddd" stroke="#666" stroke-width="0.8"/>
<circle cx="561.2" cy="816.5" r="14.4" fill="#7a7a7a" stroke="#5a5a5a" stroke-width="1"/>
<!-- arrows -->
<path d="M558.7,959 L572.8,974 L565.7,974 L565.7,989 L551.7,989 L551.7,974 L544.6,974 Z" fill="#1a86e0"/>
<path d="M609.5,960 L623.5,960 L623.5,975 L631.2,975 L616.7,989.5 L602.3,975 L609.5,975 Z" fill="#e02a10"/>

<!-- AIR IN / AIR OUT -->
<text x="277" y="706" font-family="Liberation Sans" font-size="20" fill="#9a9a9a">AIR IN</text>
<text x="1187" y="711" font-family="Liberation Sans" font-size="20" fill="#9a9a9a">AIR OUT</text>
</svg>

<div class="a" style="left:554px;top:261px;width:440px;height:40px;background:#e4e4e4;border-radius:3px"></div>
<div class="a nw" style="left:554px;top:270px;width:440px;text-align:center;font-size:21px;line-height:21px;color:#2e2e2e">AHU CTA</div>


<!-- value boxes -->
<style>
.vb{position:absolute;border-radius:3px;background:linear-gradient(#c4c4c4,#a9a9a9 55%,#8e8e8e);box-shadow:1px 2px 2px rgba(0,0,0,0.35)}
.vi{position:absolute;border-radius:3px;background:#252525;color:#fff;text-align:center;white-space:nowrap}
.vl{position:absolute;color:#333;text-align:center;white-space:nowrap;font-size:17px;line-height:17px}
</style>
<div class="vb" style="left:491px;top:452px;width:103px;height:55px"></div>
<div class="vl" style="left:491px;top:457px;width:103px">Humidity</div>
<div class="vi" style="left:498px;top:476px;width:89px;height:25px;font-size:21.5px;line-height:25px;text-indent:-2px">XXXX</div>

<div class="vb" style="left:727px;top:410px;width:103px;height:55px"></div>
<div class="vl" style="left:727px;top:413px;width:103px">Power</div>
<div class="vi" style="left:734px;top:434px;width:89px;height:25px;font-size:19.5px;line-height:25px">XXXXXX</div>

<div class="vb" style="left:714px;top:480px;width:129px;height:37px"></div>
<div class="a" style="left:718px;top:493.5px;width:121px;height:10px;border-radius:2px;background:#0fb00f;border:1px solid #0a4a0a"></div>

<div class="vb" style="left:978px;top:450px;width:101px;height:56px"></div>
<div class="vl" style="left:978px;top:455px;width:101px">Power</div>
<div class="vi" style="left:984px;top:474px;width:88px;height:24px;font-size:19.5px;line-height:24px">XXX %</div>

<!-- T pills -->
<div class="a" style="left:272px;top:481px;width:100px;height:32px;border-radius:16px;background:#222"></div>
<svg class="a" style="left:275px;top:483px" width="30" height="30"><path d="M1.5,13.5 A12,12 0 0 1 25.5,13.5 Z" fill="#fff"/><path d="M13.5,13 L21,6.5" stroke="#222" stroke-width="2.2"/><circle cx="13.5" cy="13" r="3" fill="#222"/><text x="9" y="27.5" font-family="Liberation Sans" font-weight="bold" font-size="13" fill="#fff">T</text></svg>
<div class="a nw" style="left:303px;top:487px;font-size:19px;line-height:19px;font-weight:bold;color:#fff">XXXXX</div>

<div class="a" style="left:1177px;top:479px;width:100px;height:32px;border-radius:16px;background:#222"></div>
<svg class="a" style="left:1180px;top:481px" width="30" height="30"><path d="M1.5,13.5 A12,12 0 0 1 25.5,13.5 Z" fill="#fff"/><path d="M13.5,13 L21,6.5" stroke="#222" stroke-width="2.2"/><circle cx="13.5" cy="13" r="3" fill="#222"/><text x="9" y="27.5" font-family="Liberation Sans" font-weight="bold" font-size="13" fill="#fff">T</text></svg>
<div class="a nw" style="left:1207px;top:485px;font-size:19px;line-height:19px;font-weight:bold;color:#fff">XXXXX</div>
<svg class="a" style="left:1170px;top:474px" width="106" height="50"><g fill="#111"><circle cx="8" cy="5" r="3"/><circle cx="8" cy="46" r="3"/><circle cx="60" cy="3.5" r="2.8"/></g><rect x="35.5" y="5" width="6" height="6" fill="#111" stroke="#fff" stroke-width="1.2"/><rect x="35.5" y="17" width="6" height="6" fill="#111" stroke="#fff" stroke-width="1.2"/><rect x="35.5" y="29.5" width="6" height="6" fill="#111" stroke="#fff" stroke-width="1.2"/><rect x="65.5" y="5" width="6" height="6" fill="#111" stroke="#fff" stroke-width="1.2"/><rect x="65.5" y="29.5" width="6" height="6" fill="#111" stroke="#fff" stroke-width="1.2"/><rect x="96" y="5" width="6" height="6" fill="#111" stroke="#fff" stroke-width="1.2"/><rect x="96" y="17" width="6" height="6" fill="#111" stroke="#fff" stroke-width="1.2"/><rect x="96" y="29.5" width="6" height="6" fill="#111" stroke="#fff" stroke-width="1.2"/></svg>

<!-- P circles -->
<svg class="a" style="left:447px;top:471px" width="34" height="34"><circle cx="17" cy="16.5" r="16" fill="#c8101a"/><path d="M5,16 A12,12 0 0 1 29,16 Z" fill="#fff"/><path d="M17,16 L25,8" stroke="#c8101a" stroke-width="2.2"/><rect x="4" y="17" width="26" height="2" fill="#c8101a"/><text x="12" y="29.5" font-family="Liberation Sans" font-weight="bold" font-size="12" fill="#fff">P</text></svg>
<svg class="a" style="left:1090px;top:480px" width="34" height="34"><circle cx="17" cy="16.5" r="16" fill="#c8101a"/><path d="M5,16 A12,12 0 0 1 29,16 Z" fill="#fff"/><path d="M17,16 L25,8" stroke="#c8101a" stroke-width="2.2"/><rect x="4" y="17" width="26" height="2" fill="#c8101a"/><text x="12" y="29.5" font-family="Liberation Sans" font-weight="bold" font-size="12" fill="#fff">P</text></svg>

<!-- Overheat -->
<div class="a" style="left:1040px;top:729px;width:136px;height:40px;border-radius:3px;background:#444;box-shadow:0 1px 2px rgba(0,0,0,0.3)"></div>
<div class="a nw" style="left:1040px;top:740px;width:122px;text-align:center;font-size:15.5px;line-height:15.5px;color:#cacaca">Overheat</div>
<svg class="a" style="left:1158px;top:707px" width="40" height="40"><circle cx="20" cy="19.5" r="18.5" fill="#e21c1c"/><circle cx="20" cy="19.5" r="16" fill="#ff3a30"/><path d="M20,5 L33,29 L7,29 Z" fill="#ffd21e" stroke="#e8a800" stroke-width="1"/><path d="M18.5,11 L21.5,11 L21,22 L19,22 Z" fill="#111"/><circle cx="20" cy="25.5" r="1.8" fill="#111"/></svg>

<!-- alarm panel -->
<div class="a" style="left:1034px;top:57px;width:241px;height:126px;background:#646464;border-left:1px solid #3c3c3c"></div>
<div class="a nw" style="left:1048px;top:68px;font-size:18.5px;color:#b9b9b9">Active alarms</div>
<div class="a nw" style="left:1048px;top:108px;font-size:18.5px;color:#b9b9b9">Ack alarms</div>
<div class="a nw" style="left:1048px;top:148px;font-size:18.5px;color:#b9b9b9">Ack All</div>
<div class="a nw" style="left:1206px;top:68px;font-size:18.5px;color:#e8141c">40</div>
<div class="a nw" style="left:1206px;top:108px;font-size:18.5px;color:#f7a632">23</div>
<div class="a" style="left:1238px;top:66px;width:25px;height:25px;border-radius:50%;border:1.5px solid #1e2a10;background:radial-gradient(circle at 50% 30%,#c8f08a,#7cc83a 55%,#4e9a1e)"></div>
<div class="a" style="left:1238px;top:106px;width:25px;height:25px;border-radius:50%;border:1.5px solid #1e2a10;background:radial-gradient(circle at 50% 30%,#c8f08a,#7cc83a 55%,#4e9a1e)"></div>

<!-- RIGHT BG -->
<div class="a" style="left:1276px;top:49px;width:552px;height:6px;background:#6f6f6f"></div>
<!-- GRAPHIC EXPLORER -->
<style>
.tr{font-size:11px;line-height:13px;white-space:pre;color:#1e1e1e;letter-spacing:-0.08px}
.tb{position:absolute;width:22px;height:19px;background:#cfe1f9;border:1px solid #6f88a8}
.tb2{position:absolute;height:20px;background:#cfe1f9;border:1px solid #6f88a8;font-size:11px;line-height:18px;text-align:center;color:#000}
</style>
<div class="a" style="left:1274px;top:54px;width:550px;height:633px;background:#66c9ea;border:1px solid #1e3340"></div>
<div class="a nw" style="left:1494px;top:61px;font-size:14.7px;line-height:16px;color:#14304a">Graphic explorer</div>
<div class="a" style="left:1795px;top:59px;width:22px;height:21px;background:#d75c48;border:1px solid #3a2020"></div>
<svg class="a" style="left:1795px;top:59px" width="22" height="21"><path d="M8,7.5 L14,13.5 M14,7.5 L8,13.5" stroke="#111" stroke-width="2.2"/></svg>
<div class="a" style="left:1282px;top:84px;width:534px;height:595px;background:#f0f0f0;border-top:1px solid #c8f0ff"></div>
<!-- toolbar row1 -->
<div class="tb" style="left:1290px;top:88px"></div><div class="tb" style="left:1315px;top:88px"></div><div class="tb" style="left:1341px;top:88px"></div><div class="tb" style="left:1366px;top:88px"></div><div class="tb" style="left:1392px;top:88px"></div><div class="tb" style="left:1417px;top:88px"></div><div class="tb" style="left:1443px;top:88px"></div><div class="tb" style="left:1468px;top:88px"></div><div class="tb" style="left:1494px;top:88px"></div><div class="tb" style="left:1519px;top:88px"></div>
<div class="tb" style="left:1290px;top:111px"></div><div class="tb" style="left:1315px;top:111px"></div><div class="tb" style="left:1341px;top:111px"></div><div class="tb" style="left:1366px;top:111px"></div><div class="tb" style="left:1392px;top:111px"></div><div class="tb" style="left:1417px;top:111px"></div><div class="tb" style="left:1443px;top:111px"></div><div class="tb" style="left:1468px;top:111px"></div><div class="tb" style="left:1494px;top:111px"></div><div class="tb" style="left:1519px;top:111px"></div>
<div class="tb" style="left:1290px;top:134px"></div><div class="tb" style="left:1315px;top:134px"></div><div class="tb" style="left:1341px;top:134px"></div><div class="tb" style="left:1366px;top:134px"></div><div class="tb" style="left:1392px;top:134px"></div><div class="tb" style="left:1417px;top:134px"></div>
<svg class="a" style="left:1290px;top:88px" width="260" height="70">
 <g fill="none" stroke="#4a5a78" stroke-width="1.1">
  <path d="M5,4 L18,16"/>
  <rect x="29" y="5" width="13" height="9" fill="#dde6f4"/>
  <rect x="55" y="5" width="14" height="10" rx="3" fill="#dde6f4"/>
  <circle cx="87" cy="10" r="6.5" fill="#dde6f4"/>
  <path d="M106,7 Q113,18 120,7"/>
  <path d="M131,5 Q133,14 141,16"/>
  <path d="M168,5 A6,6 0 1 0 168,15"/>
  <path d="M193,5 A6,6 0 1 0 193,15 L190,11"/>
  <path d="M206,5 L211,16 L222,6 M206,5 L222,12 M221,4 L221,15"/>
  <path d="M231,5 L236,16 L247,6 M231,5 L247,12 M246,4 L246,14"/>
  <path d="M3,34 Q3,29 7,29 Q9,29 11,34 Q13,39 15,39 Q19,39 19,34 Q19,29 15,29 Q13,29 11,34 Q9,39 7,39 Q3,39 3,34 Z"/>
  <path d="M44,31 Q41,29 36,34 Q32,39 30,38 Q27,37 27,34 Q27,30 30,30 Q32,30 36,34 Q40,39 43,38"/>
 </g>
 <path d="M55,27 L69,27 L69,30 L68,30 Q67,28.5 65,28.5 L63,28.5 L63,38 L65,39 L59,39 L61,38 L61,28.5 L59,28.5 Q57,28.5 56,30 L55,30 Z" fill="#4a5a78"/>
 <g><rect x="81" y="26" width="6" height="6" fill="#7aa8e8"/><rect x="85" y="30" width="9" height="9" fill="#f4c880"/></g>
 <g transform="translate(104,25)"><path d="M9,15.5 L12.5,6 L16,15.5 Z" fill="#1aa81a"/><path d="M5,3 L10,1 L12,5 L11,10 L6,11 L4,7 Z" fill="#d01010"/><circle cx="5.5" cy="11" r="4.5" fill="#e8d020"/></g>
 <g transform="translate(129,26)"><rect x="0" y="0" width="20" height="16" fill="#3a8ad8"/><rect x="0" y="0" width="20" height="5" fill="#bfe2f8"/><path d="M0,9 Q8,7 20,12 L20,16 L0,16 Z" fill="#2a8a2a"/><path d="M0,12 Q10,10 20,16 L0,16 Z" fill="#0e4e12"/></g>
 <g transform="translate(155,25)"><circle cx="8" cy="9" r="7" fill="#666"/><g fill="#eee"><circle cx="5" cy="6" r="2"/><circle cx="11" cy="6" r="2"/><circle cx="5" cy="12" r="2"/><circle cx="11" cy="12" r="2"/></g></g>
 <path d="M183,38 L189,28 M183,28 L190,38" stroke="#e02010" stroke-width="2.6"/>
 <g transform="translate(206,25)"><circle cx="4" cy="4" r="2.5" fill="#5a6aa8"/><circle cx="13" cy="4" r="2.5" fill="#888"/><rect x="4" y="8" width="10" height="8" fill="#e8d870"/></g>
 <g transform="translate(231,25)"><circle cx="8" cy="9" r="8" fill="#1a2aa0"/><path d="M4,5 L12,13 M12,5 L4,13" stroke="#ffe000" stroke-width="3"/></g>
 <g transform="translate(3,48)"><rect x="0" y="0" width="18" height="16" fill="#3a8ad8"/><rect x="0" y="0" width="18" height="5" fill="#bfe2f8"/><path d="M0,8 Q8,6 18,11 L18,16 L0,16 Z" fill="#2a8a2a"/><path d="M0,11 Q9,9 18,16 L0,16 Z" fill="#0e4e12"/></g>
 <g transform="translate(29,49)"><rect x="1" y="7" width="16" height="9" fill="#111"/><path d="M0,5 L15,1 L16,4 L1,8 Z" fill="#222"/><path d="M4,2 L14,14 M14,2 L4,14" stroke="#e02010" stroke-width="2.4"/></g>
 <g transform="translate(55,49)"><rect x="1" y="7" width="16" height="9" fill="#111"/><path d="M0,5 L15,1 L16,4 L1,8 Z" fill="#222"/><path d="M3,4.5 L5,7 M7,3.5 L9,6 M11,2.5 L13,5" stroke="#fff" stroke-width="1.3"/></g>
 <g transform="translate(80,49)"><rect x="1" y="7" width="16" height="9" fill="#111"/><path d="M0,5 L15,1 L16,4 L1,8 Z" fill="#222"/><path d="M11,1 L17,1 L15,10 L12,10 Z" fill="#ffd800"/><rect x="13" y="2.5" width="1.8" height="5" fill="#111"/></g>
 <path d="M107,50 L112,63 M106,62 L113,51" stroke="#e02010" stroke-width="2.4"/><path d="M110,52 L116,50 L112,56" stroke="#f0d020" stroke-width="1.5" fill="none"/>
 <path d="M139,49 L133,57 L137,57 L132,64 L141,55 L137,55 L142,49 Z" fill="#f0d020" stroke="#a08000" stroke-width="0.6"/>
</svg>
<div class="tb2" style="left:1290px;top:160px;width:57px">(branch)</div>
<div class="tb2" style="left:1350px;top:160px;width:57px">{x , y}</div>
<div class="tb2" style="left:1410px;top:160px;width:57px">[id]</div>
<svg class="a" style="left:1472px;top:160px" width="75" height="22">
 <rect x="4" y="3" width="6" height="6" fill="#20a020"/><rect x="8" y="7" width="7" height="7" fill="#30c030"/><rect x="12" y="11" width="6" height="6" fill="#20a020"/>
 <g transform="translate(28,1)"><rect x="3" y="5" width="11" height="11" fill="#aaa"/><path d="M2,12 L6,18 L1,18 Z" fill="#2a6ad8"/><path d="M13,14 L17,18 L12,19 Z" fill="#e8c020"/><path d="M6,7 L9,3 L13,6" stroke="#d02020" stroke-width="1.4" fill="none"/></g>
 <rect x="50" y="1" width="21" height="19" fill="#d8d8d8" stroke="#8a8a8a"/><rect x="54" y="4" width="14" height="10" fill="#e8f0fa" stroke="#7a9ac0"/><circle cx="60" cy="12" r="3" fill="none" stroke="#666"/><path d="M58,14 L55,18" stroke="#c07020" stroke-width="1.5"/>
</svg>
<!-- tree box -->
<div class="a" style="left:1290px;top:187px;width:508px;height:475px;background:#fff;border:1px solid #828790"></div>
<div class="a" style="left:1291px;top:188px;width:488px;height:455px;overflow:hidden"><div class="a" style="left:-1291px;top:-188px;width:1828px;height:1040px">
<svg class="a" style="left:1291px;top:188px" width="488" height="455"><defs><linearGradient id="skyG" x1="0" y1="0" x2="1" y2="0.6"><stop offset="0" stop-color="#a8e4f8"/><stop offset="0.5" stop-color="#3aa0e8"/><stop offset="1" stop-color="#0a58b8"/></linearGradient><radialGradient id="ballG" cx="0.4" cy="0.35" r="0.7"><stop offset="0" stop-color="#fff890"/><stop offset="0.5" stop-color="#e4d010"/><stop offset="1" stop-color="#3a3000"/></radialGradient></defs><g transform="translate(-1291,-188)">
<path d="M1322.5,188 V643" stroke="#a0a0a0" stroke-width="1" stroke-dasharray="1 1"/>
<path d="M1342.5,298 V341" stroke="#a0a0a0" stroke-width="1" stroke-dasharray="1 1"/>
<path d="M1342.5,378 V405" stroke="#a0a0a0" stroke-width="1" stroke-dasharray="1 1"/>
<path d="M1361.5,410 V437" stroke="#a0a0a0" stroke-width="1" stroke-dasharray="1 1"/>
<path d="M1380.5,442 V453" stroke="#a0a0a0" stroke-width="1" stroke-dasharray="1 1"/>
<path d="M1323,197.5 H1334" stroke="#a0a0a0" stroke-width="1" stroke-dasharray="1 1"/>
<g transform="translate(1334,189)"><rect x="1" y="1.5" width="14" height="14" fill="url(#skyG)"/><path d="M2,4 Q6,2.5 10,4.5 M6,7 Q10,5.5 14,6.5" stroke="#e4faff" stroke-width="1.2" fill="none"/><path d="M1,8 L9,13 L15,10.5 L15,15.5 L1,15.5 Z" fill="#c8eca0"/><path d="M1,6.5 Q6,8 11,15.5 L1,15.5 Z" fill="#0c5a12"/><path d="M1,10 Q4,10.5 7,15.5 L1,15.5 Z" fill="#083a0a"/></g>
<path d="M1323,213.5 H1334" stroke="#a0a0a0" stroke-width="1" stroke-dasharray="1 1"/>
<g transform="translate(1334,205)"><rect x="1" y="1.5" width="14" height="14" fill="url(#skyG)"/><path d="M2,4 Q6,2.5 10,4.5 M6,7 Q10,5.5 14,6.5" stroke="#e4faff" stroke-width="1.2" fill="none"/><path d="M1,8 L9,13 L15,10.5 L15,15.5 L1,15.5 Z" fill="#c8eca0"/><path d="M1,6.5 Q6,8 11,15.5 L1,15.5 Z" fill="#0c5a12"/><path d="M1,10 Q4,10.5 7,15.5 L1,15.5 Z" fill="#083a0a"/></g>
<path d="M1323,229.5 H1334" stroke="#a0a0a0" stroke-width="1" stroke-dasharray="1 1"/>
<g transform="translate(1334,221)"><rect x="1" y="1.5" width="14" height="14" fill="url(#skyG)"/><path d="M2,4 Q6,2.5 10,4.5 M6,7 Q10,5.5 14,6.5" stroke="#e4faff" stroke-width="1.2" fill="none"/><path d="M1,8 L9,13 L15,10.5 L15,15.5 L1,15.5 Z" fill="#c8eca0"/><path d="M1,6.5 Q6,8 11,15.5 L1,15.5 Z" fill="#0c5a12"/><path d="M1,10 Q4,10.5 7,15.5 L1,15.5 Z" fill="#083a0a"/></g>
<path d="M1323,245.5 H1334" stroke="#a0a0a0" stroke-width="1" stroke-dasharray="1 1"/>
<g transform="translate(1334,237)"><path d="M1.5,2.5 Q1.5,1.5 3,1.5 L13,1.5 Q14.5,1.5 14.5,2.5 L14.5,4.5 L13.5,4.5 Q13,3 11.5,3 L9,3 L9,14 L11,15 L5,15 L7,14 L7,3 L4.5,3 Q3,3 2.5,4.5 L1.5,4.5 Z" fill="#3a4e7a"/></g>
<path d="M1323,261.5 H1334" stroke="#a0a0a0" stroke-width="1" stroke-dasharray="1 1"/>
<g transform="translate(1334,253)"><rect x="1" y="1.5" width="14" height="14" fill="url(#skyG)"/><path d="M2,4 Q6,2.5 10,4.5 M6,7 Q10,5.5 14,6.5" stroke="#e4faff" stroke-width="1.2" fill="none"/><path d="M1,8 L9,13 L15,10.5 L15,15.5 L1,15.5 Z" fill="#c8eca0"/><path d="M1,6.5 Q6,8 11,15.5 L1,15.5 Z" fill="#0c5a12"/><path d="M1,10 Q4,10.5 7,15.5 L1,15.5 Z" fill="#083a0a"/></g>
<path d="M1323,277.5 H1334" stroke="#a0a0a0" stroke-width="1" stroke-dasharray="1 1"/>
<g transform="translate(1334,269)"><path d="M1.5,2.5 Q1.5,1.5 3,1.5 L13,1.5 Q14.5,1.5 14.5,2.5 L14.5,4.5 L13.5,4.5 Q13,3 11.5,3 L9,3 L9,14 L11,15 L5,15 L7,14 L7,3 L4.5,3 Q3,3 2.5,4.5 L1.5,4.5 Z" fill="#3a4e7a"/></g>
<path d="M1323,293.5 H1334" stroke="#a0a0a0" stroke-width="1" stroke-dasharray="1 1"/>
<rect x="1318.0" y="288.5" width="9" height="9" fill="#f2f2f2" stroke="#a4a4a4" stroke-width="1"/>
<path d="M1320.0,293.5 H1325.0" stroke="#333" stroke-width="1"/>
<g transform="translate(1334,285)"><path d="M3,2.5 L8,1 L12.5,2.5 L12.5,8.5 L7.5,10.5 L3,8.5 Z" fill="#d81818"/><path d="M8,4 L12.5,2.5 L12.5,8.5 L8,10.5 Z" fill="#7a0c0c"/><path d="M6.5,14.5 L11.5,5 L16,14 Q11,16 6.5,14.5 Z" fill="#22b422"/><path d="M11.5,5 L16,14 Q14,15 12,15 Z" fill="#0e6e0e"/><circle cx="4.8" cy="11" r="4.6" fill="url(#ballG)"/></g>
<path d="M1343,309.5 H1353" stroke="#a0a0a0" stroke-width="1" stroke-dasharray="1 1"/>
<rect x="1338.0" y="304.5" width="9" height="9" fill="#f2f2f2" stroke="#a4a4a4" stroke-width="1"/>
<path d="M1340.0,309.5 H1345.0" stroke="#333" stroke-width="1"/>
<path d="M1342.5,307 V312" stroke="#333" stroke-width="1"/>
<g transform="translate(1353,301)"><path d="M3,2.5 L8,1 L12.5,2.5 L12.5,8.5 L7.5,10.5 L3,8.5 Z" fill="#d81818"/><path d="M8,4 L12.5,2.5 L12.5,8.5 L8,10.5 Z" fill="#7a0c0c"/><path d="M6.5,14.5 L11.5,5 L16,14 Q11,16 6.5,14.5 Z" fill="#22b422"/><path d="M11.5,5 L16,14 Q14,15 12,15 Z" fill="#0e6e0e"/><circle cx="4.8" cy="11" r="4.6" fill="url(#ballG)"/></g>
<path d="M1343,325.5 H1353" stroke="#a0a0a0" stroke-width="1" stroke-dasharray="1 1"/>
<g transform="translate(1353,317)"><rect x="1" y="1.5" width="14" height="14" fill="url(#skyG)"/><path d="M2,4 Q6,2.5 10,4.5 M6,7 Q10,5.5 14,6.5" stroke="#e4faff" stroke-width="1.2" fill="none"/><path d="M1,8 L9,13 L15,10.5 L15,15.5 L1,15.5 Z" fill="#c8eca0"/><path d="M1,6.5 Q6,8 11,15.5 L1,15.5 Z" fill="#0c5a12"/><path d="M1,10 Q4,10.5 7,15.5 L1,15.5 Z" fill="#083a0a"/></g>
<path d="M1343,341.5 H1353" stroke="#a0a0a0" stroke-width="1" stroke-dasharray="1 1"/>
<g transform="translate(1353,333)"><rect x="1" y="1.5" width="14" height="14" fill="url(#skyG)"/><path d="M2,4 Q6,2.5 10,4.5 M6,7 Q10,5.5 14,6.5" stroke="#e4faff" stroke-width="1.2" fill="none"/><path d="M1,8 L9,13 L15,10.5 L15,15.5 L1,15.5 Z" fill="#c8eca0"/><path d="M1,6.5 Q6,8 11,15.5 L1,15.5 Z" fill="#0c5a12"/><path d="M1,10 Q4,10.5 7,15.5 L1,15.5 Z" fill="#083a0a"/></g>
<path d="M1323,357.5 H1334" stroke="#a0a0a0" stroke-width="1" stroke-dasharray="1 1"/>
<rect x="1318.0" y="352.5" width="9" height="9" fill="#f2f2f2" stroke="#a4a4a4" stroke-width="1"/>
<path d="M1320.0,357.5 H1325.0" stroke="#333" stroke-width="1"/>
<path d="M1322.5,355 V360" stroke="#333" stroke-width="1"/>
<g transform="translate(1334,349)"><path d="M3,2.5 L8,1 L12.5,2.5 L12.5,8.5 L7.5,10.5 L3,8.5 Z" fill="#d81818"/><path d="M8,4 L12.5,2.5 L12.5,8.5 L8,10.5 Z" fill="#7a0c0c"/><path d="M6.5,14.5 L11.5,5 L16,14 Q11,16 6.5,14.5 Z" fill="#22b422"/><path d="M11.5,5 L16,14 Q14,15 12,15 Z" fill="#0e6e0e"/><circle cx="4.8" cy="11" r="4.6" fill="url(#ballG)"/></g>
<path d="M1323,373.5 H1334" stroke="#a0a0a0" stroke-width="1" stroke-dasharray="1 1"/>
<rect x="1318.0" y="368.5" width="9" height="9" fill="#f2f2f2" stroke="#a4a4a4" stroke-width="1"/>
<path d="M1320.0,373.5 H1325.0" stroke="#333" stroke-width="1"/>
<g transform="translate(1334,365)"><path d="M3,2.5 L8,1 L12.5,2.5 L12.5,8.5 L7.5,10.5 L3,8.5 Z" fill="#d81818"/><path d="M8,4 L12.5,2.5 L12.5,8.5 L8,10.5 Z" fill="#7a0c0c"/><path d="M6.5,14.5 L11.5,5 L16,14 Q11,16 6.5,14.5 Z" fill="#22b422"/><path d="M11.5,5 L16,14 Q14,15 12,15 Z" fill="#0e6e0e"/><circle cx="4.8" cy="11" r="4.6" fill="url(#ballG)"/></g>
<path d="M1343,389.5 H1353" stroke="#a0a0a0" stroke-width="1" stroke-dasharray="1 1"/>
<g transform="translate(1353,381)"><rect x="1" y="1.5" width="14" height="14" fill="url(#skyG)"/><path d="M2,4 Q6,2.5 10,4.5 M6,7 Q10,5.5 14,6.5" stroke="#e4faff" stroke-width="1.2" fill="none"/><path d="M1,8 L9,13 L15,10.5 L15,15.5 L1,15.5 Z" fill="#c8eca0"/><path d="M1,6.5 Q6,8 11,15.5 L1,15.5 Z" fill="#0c5a12"/><path d="M1,10 Q4,10.5 7,15.5 L1,15.5 Z" fill="#083a0a"/></g>
<path d="M1343,405.5 H1353" stroke="#a0a0a0" stroke-width="1" stroke-dasharray="1 1"/>
<rect x="1338.0" y="400.5" width="9" height="9" fill="#f2f2f2" stroke="#a4a4a4" stroke-width="1"/>
<path d="M1340.0,405.5 H1345.0" stroke="#333" stroke-width="1"/>
<g transform="translate(1353,397)"><rect x="2" y="2" width="7" height="7" fill="#7aa8e8"/><rect x="7" y="7" width="8" height="8" fill="#f0c070"/><g fill="#333"><rect x="0" y="0" width="2" height="2"/><rect x="14" y="0" width="2" height="2"/><rect x="0" y="14" width="2" height="2"/><rect x="14" y="14" width="2" height="2"/></g></g>
<path d="M1362,421.5 H1372" stroke="#a0a0a0" stroke-width="1" stroke-dasharray="1 1"/>
<g transform="translate(1372,413)"><rect x="1" y="1.5" width="14" height="14" fill="url(#skyG)"/><path d="M2,4 Q6,2.5 10,4.5 M6,7 Q10,5.5 14,6.5" stroke="#e4faff" stroke-width="1.2" fill="none"/><path d="M1,8 L9,13 L15,10.5 L15,15.5 L1,15.5 Z" fill="#c8eca0"/><path d="M1,6.5 Q6,8 11,15.5 L1,15.5 Z" fill="#0c5a12"/><path d="M1,10 Q4,10.5 7,15.5 L1,15.5 Z" fill="#083a0a"/></g>
<path d="M1362,437.5 H1372" stroke="#a0a0a0" stroke-width="1" stroke-dasharray="1 1"/>
<rect x="1357.0" y="432.5" width="9" height="9" fill="#f2f2f2" stroke="#a4a4a4" stroke-width="1"/>
<path d="M1359.0,437.5 H1364.0" stroke="#333" stroke-width="1"/>
<g transform="translate(1372,429)"><path d="M1.5,2.5 Q1.5,1.5 3,1.5 L13,1.5 Q14.5,1.5 14.5,2.5 L14.5,4.5 L13.5,4.5 Q13,3 11.5,3 L9,3 L9,14 L11,15 L5,15 L7,14 L7,3 L4.5,3 Q3,3 2.5,4.5 L1.5,4.5 Z" fill="#3a4e7a"/></g>
<path d="M1381,453.5 H1390" stroke="#a0a0a0" stroke-width="1" stroke-dasharray="1 1"/>
<rect x="1376.0" y="448.5" width="9" height="9" fill="#f2f2f2" stroke="#a4a4a4" stroke-width="1"/>
<path d="M1378.0,453.5 H1383.0" stroke="#333" stroke-width="1"/>
<path d="M1380.5,451 V456" stroke="#333" stroke-width="1"/>
<g transform="translate(1390,445)"><rect x="1" y="7" width="15" height="9" fill="#111"/><path d="M0,5 L14,1 L15,4 L1,8 Z" fill="#222"/><path d="M3,4.5 L5,7 M7,3.5 L9,6 M11,2.5 L13,5" stroke="#fff" stroke-width="1.3"/><rect x="3" y="10" width="10" height="1.2" fill="#777"/></g>
<path d="M1323,469.5 H1334" stroke="#a0a0a0" stroke-width="1" stroke-dasharray="1 1"/>
<rect x="1318.0" y="464.5" width="9" height="9" fill="#f2f2f2" stroke="#a4a4a4" stroke-width="1"/>
<path d="M1320.0,469.5 H1325.0" stroke="#333" stroke-width="1"/>
<path d="M1322.5,467 V472" stroke="#333" stroke-width="1"/>
<g transform="translate(1334,461)"><path d="M3,2.5 L8,1 L12.5,2.5 L12.5,8.5 L7.5,10.5 L3,8.5 Z" fill="#d81818"/><path d="M8,4 L12.5,2.5 L12.5,8.5 L8,10.5 Z" fill="#7a0c0c"/><path d="M6.5,14.5 L11.5,5 L16,14 Q11,16 6.5,14.5 Z" fill="#22b422"/><path d="M11.5,5 L16,14 Q14,15 12,15 Z" fill="#0e6e0e"/><circle cx="4.8" cy="11" r="4.6" fill="url(#ballG)"/></g>
<path d="M1323,485.5 H1334" stroke="#a0a0a0" stroke-width="1" stroke-dasharray="1 1"/>
<rect x="1318.0" y="480.5" width="9" height="9" fill="#f2f2f2" stroke="#a4a4a4" stroke-width="1"/>
<path d="M1320.0,485.5 H1325.0" stroke="#333" stroke-width="1"/>
<path d="M1322.5,483 V488" stroke="#333" stroke-width="1"/>
<g transform="translate(1334,477)"><path d="M3,2.5 L8,1 L12.5,2.5 L12.5,8.5 L7.5,10.5 L3,8.5 Z" fill="#d81818"/><path d="M8,4 L12.5,2.5 L12.5,8.5 L8,10.5 Z" fill="#7a0c0c"/><path d="M6.5,14.5 L11.5,5 L16,14 Q11,16 6.5,14.5 Z" fill="#22b422"/><path d="M11.5,5 L16,14 Q14,15 12,15 Z" fill="#0e6e0e"/><circle cx="4.8" cy="11" r="4.6" fill="url(#ballG)"/></g>
<path d="M1323,501.5 H1334" stroke="#a0a0a0" stroke-width="1" stroke-dasharray="1 1"/>
<rect x="1318.0" y="496.5" width="9" height="9" fill="#f2f2f2" stroke="#a4a4a4" stroke-width="1"/>
<path d="M1320.0,501.5 H1325.0" stroke="#333" stroke-width="1"/>
<path d="M1322.5,499 V504" stroke="#333" stroke-width="1"/>
<g transform="translate(1334,493)"><path d="M3,2.5 L8,1 L12.5,2.5 L12.5,8.5 L7.5,10.5 L3,8.5 Z" fill="#d81818"/><path d="M8,4 L12.5,2.5 L12.5,8.5 L8,10.5 Z" fill="#7a0c0c"/><path d="M6.5,14.5 L11.5,5 L16,14 Q11,16 6.5,14.5 Z" fill="#22b422"/><path d="M11.5,5 L16,14 Q14,15 12,15 Z" fill="#0e6e0e"/><circle cx="4.8" cy="11" r="4.6" fill="url(#ballG)"/></g>
<path d="M1323,517.5 H1334" stroke="#a0a0a0" stroke-width="1" stroke-dasharray="1 1"/>
<rect x="1318.0" y="512.5" width="9" height="9" fill="#f2f2f2" stroke="#a4a4a4" stroke-width="1"/>
<path d="M1320.0,517.5 H1325.0" stroke="#333" stroke-width="1"/>
<path d="M1322.5,515 V520" stroke="#333" stroke-width="1"/>
<g transform="translate(1334,509)"><path d="M3,2.5 L8,1 L12.5,2.5 L12.5,8.5 L7.5,10.5 L3,8.5 Z" fill="#d81818"/><path d="M8,4 L12.5,2.5 L12.5,8.5 L8,10.5 Z" fill="#7a0c0c"/><path d="M6.5,14.5 L11.5,5 L16,14 Q11,16 6.5,14.5 Z" fill="#22b422"/><path d="M11.5,5 L16,14 Q14,15 12,15 Z" fill="#0e6e0e"/><circle cx="4.8" cy="11" r="4.6" fill="url(#ballG)"/></g>
<path d="M1323,533.5 H1334" stroke="#a0a0a0" stroke-width="1" stroke-dasharray="1 1"/>
<g transform="translate(1334,525)"><rect x="1" y="1.5" width="14" height="14" fill="url(#skyG)"/><path d="M2,4 Q6,2.5 10,4.5 M6,7 Q10,5.5 14,6.5" stroke="#e4faff" stroke-width="1.2" fill="none"/><path d="M1,8 L9,13 L15,10.5 L15,15.5 L1,15.5 Z" fill="#c8eca0"/><path d="M1,6.5 Q6,8 11,15.5 L1,15.5 Z" fill="#0c5a12"/><path d="M1,10 Q4,10.5 7,15.5 L1,15.5 Z" fill="#083a0a"/></g>
<path d="M1323,549.5 H1334" stroke="#a0a0a0" stroke-width="1" stroke-dasharray="1 1"/>
<g transform="translate(1334,541)"><path d="M1.5,2.5 Q1.5,1.5 3,1.5 L13,1.5 Q14.5,1.5 14.5,2.5 L14.5,4.5 L13.5,4.5 Q13,3 11.5,3 L9,3 L9,14 L11,15 L5,15 L7,14 L7,3 L4.5,3 Q3,3 2.5,4.5 L1.5,4.5 Z" fill="#3a4e7a"/></g>
<path d="M1323,565.5 H1334" stroke="#a0a0a0" stroke-width="1" stroke-dasharray="1 1"/>
<rect x="1318.0" y="560.5" width="9" height="9" fill="#f2f2f2" stroke="#a4a4a4" stroke-width="1"/>
<path d="M1320.0,565.5 H1325.0" stroke="#333" stroke-width="1"/>
<path d="M1322.5,563 V568" stroke="#333" stroke-width="1"/>
<g transform="translate(1334,557)"><circle cx="8" cy="8.5" r="7.5" fill="#444"/><g fill="#ddd"><circle cx="5" cy="5" r="2"/><circle cx="4.5" cy="11" r="2"/><circle cx="9" cy="13" r="2"/></g><path d="M9,1 L15,1 L13,11 L10,11 Z" fill="#ffd800"/><rect x="10.5" y="3" width="2" height="5" fill="#111"/><circle cx="11.5" cy="10" r="1" fill="#111"/></g>
<path d="M1323,581.5 H1334" stroke="#a0a0a0" stroke-width="1" stroke-dasharray="1 1"/>
<g transform="translate(1334,573)"><rect x="1" y="1.5" width="14" height="14" fill="url(#skyG)"/><path d="M2,4 Q6,2.5 10,4.5 M6,7 Q10,5.5 14,6.5" stroke="#e4faff" stroke-width="1.2" fill="none"/><path d="M1,8 L9,13 L15,10.5 L15,15.5 L1,15.5 Z" fill="#c8eca0"/><path d="M1,6.5 Q6,8 11,15.5 L1,15.5 Z" fill="#0c5a12"/><path d="M1,10 Q4,10.5 7,15.5 L1,15.5 Z" fill="#083a0a"/></g>
<path d="M1323,597.5 H1334" stroke="#a0a0a0" stroke-width="1" stroke-dasharray="1 1"/>
<rect x="1318.0" y="592.5" width="9" height="9" fill="#f2f2f2" stroke="#a4a4a4" stroke-width="1"/>
<path d="M1320.0,597.5 H1325.0" stroke="#333" stroke-width="1"/>
<path d="M1322.5,595 V600" stroke="#333" stroke-width="1"/>
<g transform="translate(1334,589)"><path d="M1.5,2.5 Q1.5,1.5 3,1.5 L13,1.5 Q14.5,1.5 14.5,2.5 L14.5,4.5 L13.5,4.5 Q13,3 11.5,3 L9,3 L9,14 L11,15 L5,15 L7,14 L7,3 L4.5,3 Q3,3 2.5,4.5 L1.5,4.5 Z" fill="#3a4e7a"/></g>
<path d="M1323,613.5 H1334" stroke="#a0a0a0" stroke-width="1" stroke-dasharray="1 1"/>
<g transform="translate(1334,605)"><path d="M1.5,2.5 Q1.5,1.5 3,1.5 L13,1.5 Q14.5,1.5 14.5,2.5 L14.5,4.5 L13.5,4.5 Q13,3 11.5,3 L9,3 L9,14 L11,15 L5,15 L7,14 L7,3 L4.5,3 Q3,3 2.5,4.5 L1.5,4.5 Z" fill="#3a4e7a"/></g>
<path d="M1323,629.5 H1334" stroke="#a0a0a0" stroke-width="1" stroke-dasharray="1 1"/>
<g transform="translate(1334,621)"><rect x="1" y="1.5" width="14" height="14" fill="url(#skyG)"/><path d="M2,4 Q6,2.5 10,4.5 M6,7 Q10,5.5 14,6.5" stroke="#e4faff" stroke-width="1.2" fill="none"/><path d="M1,8 L9,13 L15,10.5 L15,15.5 L1,15.5 Z" fill="#c8eca0"/><path d="M1,6.5 Q6,8 11,15.5 L1,15.5 Z" fill="#0c5a12"/><path d="M1,10 Q4,10.5 7,15.5 L1,15.5 Z" fill="#083a0a"/></g>
<path d="M1323,645.5 H1334" stroke="#a0a0a0" stroke-width="1" stroke-dasharray="1 1"/>
<rect x="1318.0" y="640.5" width="9" height="9" fill="#f2f2f2" stroke="#a4a4a4" stroke-width="1"/>
<path d="M1320.0,645.5 H1325.0" stroke="#333" stroke-width="1"/>
<path d="M1322.5,643 V648" stroke="#333" stroke-width="1"/>
<g transform="translate(1334,637)"><rect x="1" y="1.5" width="14" height="14" fill="url(#skyG)"/><path d="M2,4 Q6,2.5 10,4.5 M6,7 Q10,5.5 14,6.5" stroke="#e4faff" stroke-width="1.2" fill="none"/><path d="M1,8 L9,13 L15,10.5 L15,15.5 L1,15.5 Z" fill="#c8eca0"/><path d="M1,6.5 Q6,8 11,15.5 L1,15.5 Z" fill="#0c5a12"/><path d="M1,10 Q4,10.5 7,15.5 L1,15.5 Z" fill="#083a0a"/></g>
</g></svg>
<div class="a tr" style="left:1354px;top:190.5px">/SH_PIPES/PIPES_TYPE2_H_RED_32.png { 592, 755 } [ Bitmap19 ]</div>
<div class="a tr" style="left:1354px;top:206.5px">/SH_ARROWS/ARROWS_INCRUSTED_TOP_BLUE_32.png { 541, 907 } [ Bitmap20 ]</div>
<div class="a tr" style="left:1354px;top:222.5px">/SH_ARROWS/ARROWS_EMBOSSED_R_GREEN_32.png { 287, 594 } [ Bitmap16 ]</div>
<div class="a tr" style="left:1354px;top:238.5px">AIR IN { 269, 636 } [ Text4 ]</div>
<div class="a tr" style="left:1354px;top:254.5px">/SH_ARROWS/ARROWS_EMBOSSED_R_GREEN_32.png { 1216, 599 } [ Bitmap17 ]</div>
<div class="a tr" style="left:1354px;top:270.5px">AIR OUT { 1182, 641 } [ Text10 ]</div>
<div class="a tr" style="left:1354px;top:286.5px">/SH_HVAC/HVAC_AHU_FAN_L2R_HOTAIRFLOW_H_ANI ( Blower ) { 625, 461 } [ BMS_B01 ]</div>
<div class="a tr" style="left:1374px;top:302.5px">/SH_HVAC/HVAC_FAN_CW_90_ANI { 667, 515 } [ Symbol24 ]</div>
<div class="a tr" style="left:1374px;top:318.5px">/SH_HVAC/HVAC_AHU_BLOWER_LARGE_H_ALPHA_L2R_120.png { 625, 461 } [ Bitmap ]</div>
<div class="a tr" style="left:1374px;top:334.5px">/SH_HVAC/HVAC_AHU_FAN_AIRFLOW_RED_L2R_120.png { 817, 461 } [ Bitmap18 ]</div>
<div class="a tr" style="left:1354px;top:350.5px">/SH_SENSORS/SENSORS_VALUE_MANO_ICON_TEMPERATURE_TOP_ANTHRACITE</div>
<div class="a tr" style="left:1354px;top:366.5px">/SH_SENSORS/SENSORS_VALUE_MANO_ICON_TEMPERATURE_TOP_ANTHRACITE</div>
<div class="a tr" style="left:1374px;top:382.5px">/SH_SENSORS/SENSORS_MANOMETER_COLD_BOT_WHITE_54.png { 1197, 455 }</div>
<div class="a tr" style="left:1374px;top:398.5px">{ 1174, 428 } [ Group74 ]</div>
<div class="a tr" style="left:1393px;top:414.5px">/SH_SENSORS/SENSORS_ICONS_VALUE_TEMPERATURE_ANTHRACITE_TOP</div>
<div class="a" style="left:1390px;top:429px;width:145px;height:15.5px;background:#3399ff"></div>
<div class="a tr" style="left:1393px;top:430.5px;color:#fff">XXXXX { 1206, 431 } [ Text5 ]</div>
<div class="a tr" style="left:1411.5px;top:446.5px">I</div>
<div class="a tr" style="left:1354px;top:462.5px">/SH_SENSO</div>
<div class="a tr" style="left:1354px;top:478.5px">/SH_HVAC/</div>
<div class="a tr" style="left:1354px;top:494.5px">/SH_HVAC/</div>
<div class="a tr" style="left:1354px;top:510.5px">/SH_SENSO</div>
<div class="a tr" style="left:1354px;top:526.5px">/SH_DISPL</div>
<div class="a tr" style="left:1354px;top:542.5px">Overheat { 1</div>
<div class="a tr" style="left:1354px;top:558.5px">/SH_DISPL</div>
<div class="a tr" style="left:1354px;top:574.5px">/SH_DISPL</div>
<div class="a tr" style="left:1354px;top:590.5px">XXXXXX { 7</div>
<div class="a tr" style="left:1354px;top:606.5px">     Power {</div>
<div class="a tr" style="left:1354px;top:622.5px">/SH_DISPL</div>
<div class="a tr" style="left:1354px;top:638.5px">{ 717, 444 } [ Bitmap ]</div>
<div class="a tr" style="left:1514px;top:446.5px">.B01.AHU.TempOUT ) [ Anim1 ]</div>
<div class="a tr" style="left:1514px;top:462.5px">_ICON_PRESSURE_ANI ( Pressure_OUT ) { 446, 420 }</div>
<div class="a tr" style="left:1514px;top:478.5px">IFIER1_SENSOR_H_120_ANI ( Humidifier ) { 486, 398 }</div>
<div class="a tr" style="left:1514px;top:494.5px">RY_HOT_ANI ( Battery ) { 967, 396 } [ BMS_B01_CTA_</div>
<div class="a tr" style="left:1514px;top:510.5px">_ICON_PRESSURE_ANI ( Pressure_Blower ) { 1089, 43</div>
<div class="a tr" style="left:1514px;top:526.5px">K_LABEL_136_ANTHRACITE.png { 1038, 678 } [ Bitmap</div>
<div class="a tr" style="left:1514px;top:558.5px">m.gif { 1156, 655 } [ GIF2 ]</div>
<div class="a tr" style="left:1514px;top:574.5px">NEL_SIMPLE_VALUE_BOX_ANTHRACITE.png { 722, 3</div>
<div class="a tr" style="left:1514px;top:622.5px">NEL_PROGRESSBAR_VALUE_BOX_ANTHRACITE.png</div>
</div></div>
<!-- scrollbars -->
<div class="a" style="left:1779px;top:188px;width:18px;height:455px;background:#fff;border-left:1px solid #e8e8e8"></div>
<div class="a" style="left:1780px;top:189px;width:17px;height:16px;border:1px solid #e0e0e0;background:#fff"></div>
<svg class="a" style="left:1780px;top:189px" width="17" height="16"><path d="M4.5,10 L8.5,6 L12.5,10" stroke="#606060" stroke-width="1.2" fill="none"/></svg>
<div class="a" style="left:1780px;top:333px;width:17px;height:273px;background:#cdcdcd"></div>
<svg class="a" style="left:1780px;top:460px" width="17" height="16"><path d="M4,5.5 H13 M4,8.5 H13 M4,11.5 H13" stroke="#606060" stroke-width="1.4"/></svg>
<div class="a" style="left:1780px;top:626px;width:17px;height:17px;border:1px solid #e0e0e0;background:#fff"></div>
<svg class="a" style="left:1780px;top:626px" width="17" height="17"><path d="M4.5,7 L8.5,11 L12.5,7" stroke="#606060" stroke-width="1.2" fill="none"/></svg>
<div class="a" style="left:1291px;top:643px;width:506px;height:18px;background:#fff;border-top:1px solid #e8e8e8"></div>
<div class="a" style="left:1291px;top:644px;width:18px;height:17px;border:1px solid #e0e0e0"></div>
<svg class="a" style="left:1291px;top:644px" width="18" height="17"><path d="M11,4.5 L7,8.5 L11,12.5" stroke="#606060" stroke-width="1.2" fill="none"/></svg>
<div class="a" style="left:1309px;top:644px;width:217px;height:17px;background:#cdcdcd"></div>
<svg class="a" style="left:1410px;top:644px" width="17" height="17"><path d="M5.5,5 V12 M8.5,5 V12 M11.5,5 V12" stroke="#606060" stroke-width="1.4"/></svg>
<div class="a" style="left:1762px;top:644px;width:17px;height:17px;border:1px solid #e0e0e0"></div>
<svg class="a" style="left:1762px;top:644px" width="17" height="17"><path d="M7,4.5 L11,8.5 L7,12.5" stroke="#606060" stroke-width="1.2" fill="none"/></svg>
<div class="a" style="left:1779px;top:643px;width:18px;height:18px;background:#f0f0f0"></div>
<!-- context menu -->
<div class="a" style="left:1413px;top:439px;width:100px;height:203px;background:#fafafa;border:1px solid #979797;box-shadow:2px 2px 2px rgba(0,0,0,0.25)"></div>
<div class="a" style="left:1414px;top:440px;width:23px;height:201px;background:#f0f0f0;border-right:1px solid #e2e2e2"></div>
<div class="a" style="left:1440px;top:548px;width:71px;height:1px;background:#d8d8d8"></div>
<div class="a" style="left:1440px;top:615px;width:71px;height:1px;background:#d8d8d8"></div>
<style>.cm{position:absolute;left:1440px;font-size:13px;line-height:13px;color:#111;white-space:nowrap}</style>
<div class="cm" style="top:445.5px">Color</div>
<div class="cm" style="top:466.5px">Text</div>
<div class="cm" style="top:487.5px">Symbols</div>
<div class="cm" style="top:508.5px">Position</div>
<div class="cm" style="top:529.5px">Visibility</div>
<div class="cm" style="top:554.5px">Send</div>
<div class="cm" style="top:575.5px">Run</div>
<div class="cm" style="top:596.5px">Link</div>
<div class="cm" style="top:621.5px">Security</div>
<svg class="a" style="left:1413px;top:439px" width="100" height="203">
 <g fill="#111"><path d="M90,8.5 L94,13 L90,17.5 Z"/><path d="M90,29.5 L94,34 L90,38.5 Z"/><path d="M90,50.5 L94,55 L90,59.5 Z"/><path d="M90,71.5 L94,76 L90,80.5 Z"/><path d="M90,92.5 L94,97 L90,101.5 Z"/><path d="M90,118 L94,122.5 L90,127 Z"/><path d="M90,139 L94,143.5 L90,148 Z"/><path d="M90,160 L94,164.5 L90,169 Z"/><path d="M90,185 L94,189.5 L90,194 Z"/></g>
 <!-- color wheel -->
 <g transform="translate(12,13)"><path d="M0,0 L0,-8 A8,8 0 0 1 8,0 Z" fill="#e83020"/><path d="M0,0 L8,0 A8,8 0 0 1 0,8 Z" fill="#30b030"/><path d="M0,0 L0,8 A8,8 0 0 1 -8,0 Z" fill="#f0d020"/><path d="M0,0 L-8,0 A8,8 0 0 1 0,-8 Z" fill="#e860a0"/><path d="M0,0 L5.6,-5.6 A8,8 0 0 1 8,0 Z" fill="#2080e0"/></g>
 <path d="M6,28 L18,28 L18,31 L17,31 Q16.5,29.5 15,29.5 L13,29.5 L13,40 L15,41 L9,41 L11,40 L11,29.5 L9,29.5 Q7.5,29.5 7,31 L6,31 Z" fill="#222"/>
 <g transform="translate(4,47)"><path d="M9,15.5 L12.5,6 L16,15.5 Z" fill="#1aa81a"/><path d="M5,3 L10,1 L12,5 L11,10 L6,11 L4,7 Z" fill="#d01010"/><circle cx="5.5" cy="11" r="4.5" fill="#e8d020"/></g>
 <g transform="translate(4,67)"><path d="M3,14 L5,4 M3,14 L15,14" stroke="#2a5ab8" stroke-width="1.8" fill="none"/><circle cx="4" cy="13" r="3" fill="#e84020"/><path d="M8,3 L15,3 M13,8 L16,12" stroke="#2a5ab8" stroke-width="1.2"/></g>
 <g transform="translate(4,89)"><rect x="0" y="2" width="6" height="11" fill="#a8c8f0"/><circle cx="9" cy="8" r="5.5" fill="#d8ecfa" stroke="#6a8ab8" stroke-width="1.6"/><path d="M13,12 L16,16" stroke="#c07030" stroke-width="2"/></g>
 <path d="M6,122 L14,122 L14,118.5 L19,123 L14,127.5 L14,124 L6,124 Z" fill="#30b040" stroke="#1a8a2a" stroke-width="1"/>
 <g transform="translate(12,144)"><circle r="7" fill="#8898e0"/><circle r="3.5" fill="#f0f0f0"/></g>
 <g transform="translate(3,157)"><rect x="1" y="1" width="15" height="12" fill="#d8ecfa" stroke="#3a6ab8"/><path d="M3,13 Q4,6 11,7 L11,4 L15,8 L11,12 L11,9 Q6,9 5,15 Z" fill="#30a040"/></g>
 <g transform="translate(3,181)"><circle cx="6" cy="5" r="3.5" fill="#c87040"/><path d="M0,15 Q0,9 6,9 Q12,9 12,15 Z" fill="#3a5ad0"/><circle cx="12" cy="5" r="3.5" fill="#e8a040"/><path d="M7,15 Q7,9 12,9 Q17,9 17,15 Z" fill="#40a040"/></g>
</svg>

<!-- grid strip right of canvas -->
<div class="a" style="left:1277px;top:687px;width:7px;height:353px;background:#e6e6e6"></div>
<svg class="a" style="left:1277px;top:687px" width="7" height="353"><g stroke="#474747" stroke-dasharray="3.5 2.5"><path d="M0,4.5 H7 M0,44.5 H7 M0,84.5 H7 M0,124.5 H7 M0,164.5 H7 M0,204.5 H7 M0,244.5 H7 M0,284.5 H7 M0,324.5 H7"/></g></svg>
<!-- DPM -->
<div class="a" style="left:1283px;top:687px;width:545px;height:4px;background:#6a6a6a"></div>
<div class="a" style="left:1283px;top:687px;width:4px;height:353px;background:#6a6a6a"></div>
<div class="a" style="left:1287px;top:691px;width:409px;height:349px;background:#c6d7df;border-right:1px solid #4a5560"></div>
<div class="a nw" style="left:1394px;top:697px;font-size:15.7px;line-height:17px;color:#1a1a1a">Drawing properties manager</div>
<div class="a" style="left:1667px;top:695px;width:21px;height:21px;border:1px solid #3a4652;background:#c9d9e1"></div>
<svg class="a" style="left:1667px;top:695px" width="21" height="21"><path d="M7.5,8 L13,13.5 M13,8 L7.5,13.5" stroke="#111" stroke-width="2"/></svg>
<div class="a" style="left:1293px;top:721px;width:395px;height:319px;background:#f0f0f0"></div>
<style>.dp{position:absolute;font-size:11.5px;line-height:13px;color:#111;white-space:nowrap;letter-spacing:-0.35px}
.cb{position:absolute;width:13px;height:13px;border:1px solid #333;background:#fff}
.sel{position:absolute;height:21px;border:1px solid #7a7a7a;background:#fff}
.gr{position:absolute;border:1px solid #dcdcdc;border-radius:3px}
</style>
<div class="dp" style="left:1298px;top:724px">Mode:</div>
<div class="sel" style="left:1298px;top:739px;width:120px"></div>
<div class="dp" style="left:1302px;top:744px">Selection</div>
<svg class="a" style="left:1400px;top:744px" width="14" height="12"><path d="M3,4 L7,8 L11,4" stroke="#333" stroke-width="1.6" fill="none"/></svg>
<div class="a" style="left:1299px;top:765px;width:20px;height:20px;border:1px solid #8a8a8a;background:#e4e4e4"></div>
<svg class="a" style="left:1299px;top:765px" width="20" height="20"><path d="M5,3 L12,3 L15,6 L15,17 L5,17 Z" fill="#e8f2fc" stroke="#7aa0d0" stroke-width="1"/><path d="M12,3 L12,6 L15,6" fill="#c8dcf4" stroke="#7aa0d0" stroke-width="0.8"/></svg>
<!-- tabs -->
<div class="a" style="left:1300px;top:821px;width:382px;height:219px;background:#fff;border:1px solid #adadad"></div>
<div class="a" style="left:1357px;top:799px;width:66px;height:23px;background:#f0f0f0;border:1px solid #adadad;border-bottom:none"></div>
<div class="a" style="left:1422px;top:799px;width:71px;height:23px;background:#f0f0f0;border:1px solid #adadad;border-bottom:none"></div>
<div class="a" style="left:1300px;top:796px;width:58px;height:27px;background:#fff;border:1px solid #adadad;border-bottom:none"></div>
<svg class="a" style="left:1305px;top:800px" width="20" height="18"><path d="M2,2.5 Q2,1.5 3.5,1.5 L14.5,1.5 Q16,1.5 16,2.5 L16,5 L15,5 Q14.5,3.2 12.5,3.2 L10,3.2 L10,15 L12,16 L6,16 L8,15 L8,3.2 L5.5,3.2 Q3.5,3.2 3,5 L2,5 Z" fill="#4a6aa8"/></svg>
<div class="dp" style="left:1329px;top:802px">Text</div>
<svg class="a" style="left:1362px;top:802px" width="20" height="16"><rect x="2" y="3" width="14" height="10" fill="#555"/><rect x="2" y="3" width="14" height="10" fill="url(#aspG)"/><defs><linearGradient id="aspG"><stop offset="0" stop-color="#aaa"/><stop offset="1" stop-color="#333"/></linearGradient></defs></svg>
<div class="dp" style="left:1384px;top:804px">Aspect</div>
<svg class="a" style="left:1427px;top:802px" width="20" height="18"><rect x="1" y="4" width="5" height="9" fill="#a8c8f0"/><circle cx="9" cy="9" r="5" fill="#d8ecfa" stroke="#6a8ab8" stroke-width="1.6"/><path d="M12.5,12.5 L16,16" stroke="#c07030" stroke-width="2"/></svg>
<div class="dp" style="left:1450px;top:804px">Visibility</div>
<!-- font group -->
<div class="gr" style="left:1312px;top:837px;width:356px;height:59px"></div>
<div class="dp" style="left:1318px;top:829px;background:#fff;padding:0 3px">Font</div>
<div class="sel" style="left:1323px;top:847px;width:164px;height:21px"></div>
<div class="a nw" style="left:1327px;top:850px;font-family:'Liberation Serif';font-style:italic;font-size:15px;line-height:15px;color:#222">O</div>
<div class="dp" style="left:1342px;top:851px">Arial</div>
<svg class="a" style="left:1467px;top:851px" width="14" height="12"><path d="M3,4 L7,8 L11,4" stroke="#333" stroke-width="1.6" fill="none"/></svg>
<div class="sel" style="left:1506px;top:847px;width:60px;height:21px"></div>
<div class="dp" style="left:1510px;top:851px">14</div>
<svg class="a" style="left:1549px;top:851px" width="14" height="12"><path d="M3,4 L7,8 L11,4" stroke="#333" stroke-width="1.6" fill="none"/></svg>
<div class="a" style="left:1613px;top:847px;width:27px;height:21px;background:#dcdcdc;border:1px solid #9a9a9a"></div>
<svg class="a" style="left:1613px;top:847px" width="27" height="21"><path d="M5,7 L11,7 L13,9 L21,9 L21,17 L5,17 Z" fill="#e8c030"/><path d="M7,11 L23,11 L21,17 L5,17 Z" fill="#f8e070"/><path d="M19,4 L23,8 L19,10 Z" fill="#30a030"/></svg>
<div class="cb" style="left:1323px;top:875px"></div>
<svg class="a" style="left:1323px;top:875px" width="13" height="13"><path d="M2.5,6.5 L5.5,9.5 L10.5,3" stroke="#111" stroke-width="1.8" fill="none"/></svg>
<div class="dp" style="left:1339px;top:876px">Bold</div>
<div class="cb" style="left:1416px;top:875px"></div>
<div class="dp" style="left:1432px;top:876px">Italic</div>
<div class="cb" style="left:1506px;top:875px"></div>
<div class="dp" style="left:1522px;top:876px">Underline</div>
<!-- colors group -->
<div class="gr" style="left:1312px;top:908px;width:356px;height:36px"></div>
<div class="dp" style="left:1317px;top:901px;background:#fff;padding:0 3px">Colors</div>
<div class="dp" style="left:1323px;top:920px">Text</div>
<div class="a" style="left:1386px;top:917px;width:29px;height:17px;border:1px solid #adadad;background:#fff"></div>
<div class="dp" style="left:1506px;top:920px">Background</div>
<div class="a" style="left:1611px;top:917px;width:29px;height:17px;border:1px solid #cfcfcf;background:#f4f4f4"></div>
<svg class="a" style="left:1611px;top:917px" width="29" height="17"><ellipse cx="14.5" cy="8.5" rx="7" ry="6" fill="#b8d8f4"/><path d="M7.5,8.5 H21.5" stroke="#fff" stroke-width="1.5"/><g fill="#ddd"><rect x="1" y="1" width="3" height="3"/><rect x="25" y="1" width="3" height="3"/><rect x="1" y="13" width="3" height="3"/><rect x="25" y="13" width="3" height="3"/></g></svg>
<!-- format group -->
<div class="gr" style="left:1312px;top:955px;width:356px;height:69px"></div>
<div class="dp" style="left:1318px;top:948px;background:#fff;padding:0 3px">Format</div>
<div class="cb" style="left:1323px;top:967px"></div>
<svg class="a" style="left:1323px;top:967px" width="13" height="13"><path d="M2.5,6.5 L5.5,9.5 L10.5,3" stroke="#111" stroke-width="1.8" fill="none"/></svg>
<div class="dp" style="left:1339px;top:968px">Do not auto size</div>
<div class="cb" style="left:1323px;top:999px"></div>
<div class="dp" style="left:1339px;top:1000px">Multiline</div>
<div class="dp" style="left:1506px;top:969px">Alignment</div>
<div class="sel" style="left:1576px;top:966px;width:65px;height:21px"></div>
<div class="dp" style="left:1580px;top:970px">Center</div>
<svg class="a" style="left:1622px;top:970px" width="14" height="12"><path d="M3,4 L7,8 L11,4" stroke="#333" stroke-width="1.6" fill="none"/></svg>
<div class="dp" style="left:1506px;top:1001px">Margin</div>
<div class="a" style="left:1587px;top:995px;width:53px;height:21px;border:1px solid #7a7a7a;background:#fff"></div>
<div class="dp" style="left:1590px;top:999px">0</div>
<div class="a" style="left:1622px;top:996px;width:17px;height:19px;background:#e8e8e8;border-left:1px solid #c8c8c8"></div>
<svg class="a" style="left:1622px;top:996px" width="17" height="19"><path d="M5.5,6.5 L8.5,3.5 L11.5,6.5 M5.5,12.5 L8.5,15.5 L11.5,12.5" stroke="#333" stroke-width="1.3" fill="none"/></svg>
<div class="a" style="left:1301px;top:1034px;width:380px;height:6px;background:#fff"></div>
<div class="a" style="left:1293px;top:1036px;width:395px;height:4px;background:#c6d7df"></div>

<div class="a" style="left:1695px;top:1034px;width:133px;height:3px;background:#6a6a6a"></div><div class="a" style="left:1695px;top:1037px;width:133px;height:3px;background:#f4f4f4"></div>
</body></html>
